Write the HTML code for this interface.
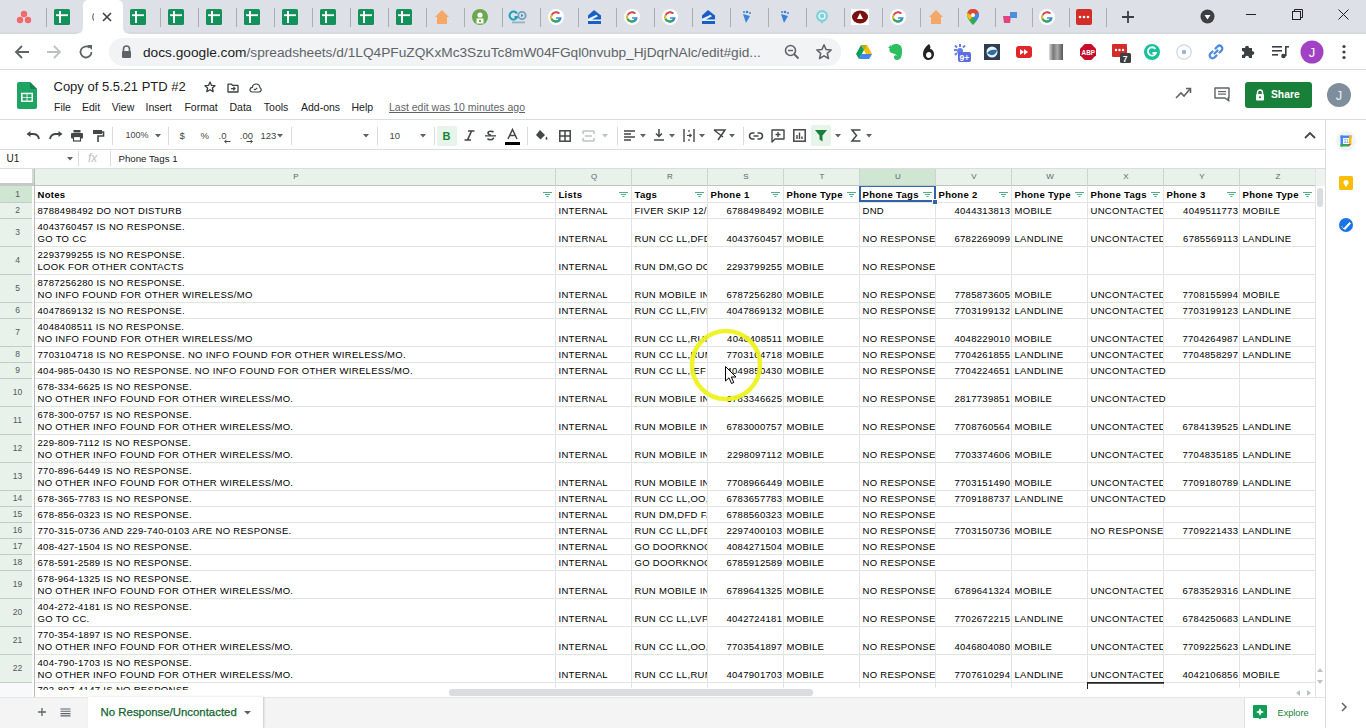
<!DOCTYPE html>
<html><head><meta charset="utf-8"><style>
html,body{margin:0;padding:0;}
body{width:1366px;height:728px;overflow:hidden;position:relative;background:#fff;font-family:"Liberation Sans",sans-serif;}
.t{position:absolute;white-space:pre;line-height:normal;}
.r{position:absolute;}
.s{position:absolute;overflow:visible;}
</style></head><body>
<div class="r" style="left:0px;top:0px;width:1366px;height:34px;background:#dde0e7;"></div><div class="r" style="left:0px;top:32px;width:1366px;height:2px;background:#d6d9de;"></div><svg class="s" style="left:74px;top:0px;" width="58" height="34" viewBox="0 0 58 34"><path d="M0 34 C6 34 9 32 9 27 L9 6 C9 2 11 0 15 0 L43 0 C47 0 49 2 49 6 L49 27 C49 32 52 34 58 34 Z" fill="#fff"/></svg><div class="r" style="left:0px;top:34px;width:1366px;height:36px;background:#fff;"></div><svg class="s" style="left:90px;top:12px;" width="6" height="10" viewBox="0 0 6 10"><path d="M3.8 1.5 C2.6 3.5 2.6 6.5 3.8 8.5" stroke="#5f6368" stroke-width="1.1" fill="none"/></svg><svg class="s" style="left:102px;top:12px;" width="10" height="10" viewBox="0 0 10 10"><path d="M1 1 L9 9 M9 1 L1 9" stroke="#3c4043" stroke-width="1.6"/></svg><svg class="s" style="left:16px;top:10px;" width="16" height="14" viewBox="0 0 16 14"><circle cx="8" cy="4" r="3.2" fill="#f06a6a"/><circle cx="4" cy="10" r="3.2" fill="#f06a6a"/><circle cx="12" cy="10" r="3.2" fill="#f06a6a"/></svg><div class="r" style="left:46px;top:8px;width:1px;height:19px;background:#a9adb4;"></div><svg class="s" style="left:54px;top:9px;" width="16" height="16" viewBox="0 0 16 16"><rect x="0" y="0" width="16" height="16" rx="1.5" fill="#12925a"/><rect x="2" y="5.3" width="12" height="1.8" fill="#fff"/><rect x="5" y="2" width="2" height="12" fill="#fff"/></svg><div class="r" style="left:160px;top:8px;width:1px;height:19px;background:#a9adb4;"></div><div class="r" style="left:198px;top:8px;width:1px;height:19px;background:#a9adb4;"></div><div class="r" style="left:236px;top:8px;width:1px;height:19px;background:#a9adb4;"></div><div class="r" style="left:274px;top:8px;width:1px;height:19px;background:#a9adb4;"></div><div class="r" style="left:312px;top:8px;width:1px;height:19px;background:#a9adb4;"></div><div class="r" style="left:350px;top:8px;width:1px;height:19px;background:#a9adb4;"></div><div class="r" style="left:388px;top:8px;width:1px;height:19px;background:#a9adb4;"></div><div class="r" style="left:426px;top:8px;width:1px;height:19px;background:#a9adb4;"></div><div class="r" style="left:464px;top:8px;width:1px;height:19px;background:#a9adb4;"></div><div class="r" style="left:502px;top:8px;width:1px;height:19px;background:#a9adb4;"></div><div class="r" style="left:540px;top:8px;width:1px;height:19px;background:#a9adb4;"></div><div class="r" style="left:578px;top:8px;width:1px;height:19px;background:#a9adb4;"></div><div class="r" style="left:616px;top:8px;width:1px;height:19px;background:#a9adb4;"></div><div class="r" style="left:654px;top:8px;width:1px;height:19px;background:#a9adb4;"></div><div class="r" style="left:692px;top:8px;width:1px;height:19px;background:#a9adb4;"></div><div class="r" style="left:730px;top:8px;width:1px;height:19px;background:#a9adb4;"></div><div class="r" style="left:768px;top:8px;width:1px;height:19px;background:#a9adb4;"></div><div class="r" style="left:806px;top:8px;width:1px;height:19px;background:#a9adb4;"></div><div class="r" style="left:844px;top:8px;width:1px;height:19px;background:#a9adb4;"></div><div class="r" style="left:882px;top:8px;width:1px;height:19px;background:#a9adb4;"></div><div class="r" style="left:920px;top:8px;width:1px;height:19px;background:#a9adb4;"></div><div class="r" style="left:958px;top:8px;width:1px;height:19px;background:#a9adb4;"></div><div class="r" style="left:995px;top:8px;width:1px;height:19px;background:#a9adb4;"></div><div class="r" style="left:1032px;top:8px;width:1px;height:19px;background:#a9adb4;"></div><div class="r" style="left:1069px;top:8px;width:1px;height:19px;background:#a9adb4;"></div><div class="r" style="left:1106px;top:8px;width:1px;height:19px;background:#a9adb4;"></div><svg class="s" style="left:130px;top:9px;" width="16" height="16" viewBox="0 0 16 16"><rect x="0" y="0" width="16" height="16" rx="1.5" fill="#12925a"/><rect x="2" y="5.3" width="12" height="1.8" fill="#fff"/><rect x="5" y="2" width="2" height="12" fill="#fff"/></svg><svg class="s" style="left:168px;top:9px;" width="16" height="16" viewBox="0 0 16 16"><rect x="0" y="0" width="16" height="16" rx="1.5" fill="#12925a"/><rect x="2" y="5.3" width="12" height="1.8" fill="#fff"/><rect x="5" y="2" width="2" height="12" fill="#fff"/></svg><svg class="s" style="left:206px;top:9px;" width="16" height="16" viewBox="0 0 16 16"><rect x="0" y="0" width="16" height="16" rx="1.5" fill="#12925a"/><rect x="2" y="5.3" width="12" height="1.8" fill="#fff"/><rect x="5" y="2" width="2" height="12" fill="#fff"/></svg><svg class="s" style="left:244px;top:9px;" width="16" height="16" viewBox="0 0 16 16"><rect x="0" y="0" width="16" height="16" rx="1.5" fill="#12925a"/><rect x="2" y="5.3" width="12" height="1.8" fill="#fff"/><rect x="5" y="2" width="2" height="12" fill="#fff"/></svg><svg class="s" style="left:282px;top:9px;" width="16" height="16" viewBox="0 0 16 16"><rect x="0" y="0" width="16" height="16" rx="1.5" fill="#12925a"/><rect x="2" y="5.3" width="12" height="1.8" fill="#fff"/><rect x="5" y="2" width="2" height="12" fill="#fff"/></svg><svg class="s" style="left:320px;top:9px;" width="16" height="16" viewBox="0 0 16 16"><rect x="0" y="0" width="16" height="16" rx="1.5" fill="#12925a"/><rect x="2" y="5.3" width="12" height="1.8" fill="#fff"/><rect x="5" y="2" width="2" height="12" fill="#fff"/></svg><svg class="s" style="left:358px;top:9px;" width="16" height="16" viewBox="0 0 16 16"><rect x="0" y="0" width="16" height="16" rx="1.5" fill="#12925a"/><rect x="2" y="5.3" width="12" height="1.8" fill="#fff"/><rect x="5" y="2" width="2" height="12" fill="#fff"/></svg><svg class="s" style="left:396px;top:9px;" width="16" height="16" viewBox="0 0 16 16"><rect x="0" y="0" width="16" height="16" rx="1.5" fill="#12925a"/><rect x="2" y="5.3" width="12" height="1.8" fill="#fff"/><rect x="5" y="2" width="2" height="12" fill="#fff"/></svg><svg class="s" style="left:434px;top:9px;" width="16" height="16" viewBox="0 0 16 16"><path d="M8 1 L15 8 L13 8 L13 15 L3 15 L3 8 L1 8 Z" fill="#f5a866"/></svg><svg class="s" style="left:472px;top:9px;" width="16" height="16" viewBox="0 0 16 16"><circle cx="8" cy="8" r="8" fill="#6aa84f"/><circle cx="8" cy="6" r="2.6" fill="#fff"/><rect x="4.5" y="9.5" width="7" height="5" fill="#fff"/><rect x="7" y="11" width="2" height="2" fill="#6aa84f"/></svg><svg class="s" style="left:509px;top:9px;" width="18" height="16" viewBox="0 0 18 16"><path d="M8 4.5 A4 4 0 1 0 8.3 8 H5.5" stroke="#1f9fb8" stroke-width="2" fill="none"/><circle cx="13" cy="6.5" r="3.7" stroke="#7a9fc0" stroke-width="1.8" fill="none"/><path d="M12 4.8 L14.6 6.5 L12 8.2Z" fill="#1f9fb8"/><rect x="3" y="12.5" width="13" height="1.8" fill="#8fb3c8"/></svg><svg class="s" style="left:548px;top:9px;" width="16" height="16" viewBox="0 0 16 16"><circle cx="8" cy="8" r="8" fill="#fff"/><path d="M12.6 8.2 H8 V9.8 H10.8 C10.5 11.2 9.4 12 8 12 A4 4 0 1 1 10.7 5.1 L11.9 3.9 A5.7 5.7 0 1 0 13.7 8.2 Z" fill="#4285f4"/><path d="M3.1 5.6 A5.6 5.6 0 0 1 11.9 3.9 L10.7 5.1 A4 4 0 0 0 4.5 6.4Z" fill="#ea4335"/><path d="M2.6 10.5 A5.6 5.6 0 0 1 3.1 5.6 L4.5 6.4 A4 4 0 0 0 4.3 9.6Z" fill="#fbbc05"/><path d="M4.3 9.6 A4 4 0 0 0 10.8 9.8 L12.6 10.2 A5.7 5.7 0 0 1 2.6 10.5Z" fill="#34a853"/></svg><svg class="s" style="left:586px;top:9px;" width="16" height="16" viewBox="0 0 16 16"><path d="M8 1 L15 6.5 V15 H2 V6.5 Z" fill="#1a5fc4"/><path d="M2 9.8 L10.5 5.8 L12 7.2 L6 10.6 H15 V12 H2Z" fill="#e8f2ff"/></svg><svg class="s" style="left:624px;top:9px;" width="16" height="16" viewBox="0 0 16 16"><circle cx="8" cy="8" r="8" fill="#fff"/><path d="M12.6 8.2 H8 V9.8 H10.8 C10.5 11.2 9.4 12 8 12 A4 4 0 1 1 10.7 5.1 L11.9 3.9 A5.7 5.7 0 1 0 13.7 8.2 Z" fill="#4285f4"/><path d="M3.1 5.6 A5.6 5.6 0 0 1 11.9 3.9 L10.7 5.1 A4 4 0 0 0 4.5 6.4Z" fill="#ea4335"/><path d="M2.6 10.5 A5.6 5.6 0 0 1 3.1 5.6 L4.5 6.4 A4 4 0 0 0 4.3 9.6Z" fill="#fbbc05"/><path d="M4.3 9.6 A4 4 0 0 0 10.8 9.8 L12.6 10.2 A5.7 5.7 0 0 1 2.6 10.5Z" fill="#34a853"/></svg><svg class="s" style="left:662px;top:9px;" width="16" height="16" viewBox="0 0 16 16"><circle cx="8" cy="8" r="8" fill="#fff"/><path d="M12.6 8.2 H8 V9.8 H10.8 C10.5 11.2 9.4 12 8 12 A4 4 0 1 1 10.7 5.1 L11.9 3.9 A5.7 5.7 0 1 0 13.7 8.2 Z" fill="#4285f4"/><path d="M3.1 5.6 A5.6 5.6 0 0 1 11.9 3.9 L10.7 5.1 A4 4 0 0 0 4.5 6.4Z" fill="#ea4335"/><path d="M2.6 10.5 A5.6 5.6 0 0 1 3.1 5.6 L4.5 6.4 A4 4 0 0 0 4.3 9.6Z" fill="#fbbc05"/><path d="M4.3 9.6 A4 4 0 0 0 10.8 9.8 L12.6 10.2 A5.7 5.7 0 0 1 2.6 10.5Z" fill="#34a853"/></svg><svg class="s" style="left:700px;top:9px;" width="16" height="16" viewBox="0 0 16 16"><path d="M8 1 L15 6.5 V15 H2 V6.5 Z" fill="#1a5fc4"/><path d="M2 9.8 L10.5 5.8 L12 7.2 L6 10.6 H15 V12 H2Z" fill="#e8f2ff"/></svg><svg class="s" style="left:738px;top:9px;" width="16" height="16" viewBox="0 0 16 16"><path d="M5 5 L12 7 L8 14 Z" fill="#3b82d6"/><circle cx="9" cy="3" r="1.3" fill="#3b82d6"/><circle cx="12" cy="4" r="1" fill="#3b82d6"/><circle cx="6" cy="3" r="1" fill="#3b82d6"/></svg><svg class="s" style="left:776px;top:9px;" width="16" height="16" viewBox="0 0 16 16"><path d="M5 5 L12 7 L8 14 Z" fill="#3b82d6"/><circle cx="9" cy="3" r="1.3" fill="#3b82d6"/><circle cx="12" cy="4" r="1" fill="#3b82d6"/><circle cx="6" cy="3" r="1" fill="#3b82d6"/></svg><svg class="s" style="left:814px;top:9px;" width="16" height="16" viewBox="0 0 16 16"><circle cx="8" cy="7" r="6" fill="#7fd3d9"/><circle cx="8" cy="7" r="3" fill="none" stroke="#fff" stroke-width="1.2"/><path d="M6 12 L8 15 L10 12Z" fill="#7fd3d9"/></svg><svg class="s" style="left:851px;top:9px;" width="18" height="16" viewBox="0 0 18 16"><rect x="0" y="0" width="18" height="16" fill="#fff"/><ellipse cx="9" cy="8" rx="8" ry="6.5" fill="#7a1010"/><path d="M9 4 L12 10 L6 10Z" fill="#fff"/></svg><svg class="s" style="left:890px;top:9px;" width="16" height="16" viewBox="0 0 16 16"><circle cx="8" cy="8" r="8" fill="#fff"/><path d="M12.6 8.2 H8 V9.8 H10.8 C10.5 11.2 9.4 12 8 12 A4 4 0 1 1 10.7 5.1 L11.9 3.9 A5.7 5.7 0 1 0 13.7 8.2 Z" fill="#4285f4"/><path d="M3.1 5.6 A5.6 5.6 0 0 1 11.9 3.9 L10.7 5.1 A4 4 0 0 0 4.5 6.4Z" fill="#ea4335"/><path d="M2.6 10.5 A5.6 5.6 0 0 1 3.1 5.6 L4.5 6.4 A4 4 0 0 0 4.3 9.6Z" fill="#fbbc05"/><path d="M4.3 9.6 A4 4 0 0 0 10.8 9.8 L12.6 10.2 A5.7 5.7 0 0 1 2.6 10.5Z" fill="#34a853"/></svg><svg class="s" style="left:928px;top:9px;" width="16" height="16" viewBox="0 0 16 16"><path d="M8 1 L15 8 L13 8 L13 15 L3 15 L3 8 L1 8 Z" fill="#f5a866"/></svg><svg class="s" style="left:965px;top:9px;" width="16" height="16" viewBox="0 0 16 16"><path d="M8 0 C4 0 2 3 2 6 C2 10 8 16 8 16 C8 16 14 10 14 6 C14 3 12 0 8 0Z" fill="#34a853"/><path d="M8 0 C5 0 3 2 2.5 4 L8 7 L13.5 4 C13 2 11 0 8 0Z" fill="#ea4335"/><path d="M13.5 4 L8 7 L11 12 C13 9 14 7.5 14 6Z" fill="#4285f4"/><path d="M2.5 4 L8 7 L5 11 C3 9 2 7 2 6Z" fill="#fbbc05"/><circle cx="8" cy="6" r="2" fill="#fff"/></svg><svg class="s" style="left:1002px;top:9px;" width="16" height="16" viewBox="0 0 16 16"><path d="M1 7 L9 7 L8 14 L2 14Z" fill="#e0457b"/><rect x="8" y="3" width="7" height="6" fill="#4a90d9"/></svg><svg class="s" style="left:1039px;top:9px;" width="16" height="16" viewBox="0 0 16 16"><circle cx="8" cy="8" r="8" fill="#fff"/><path d="M12.6 8.2 H8 V9.8 H10.8 C10.5 11.2 9.4 12 8 12 A4 4 0 1 1 10.7 5.1 L11.9 3.9 A5.7 5.7 0 1 0 13.7 8.2 Z" fill="#4285f4"/><path d="M3.1 5.6 A5.6 5.6 0 0 1 11.9 3.9 L10.7 5.1 A4 4 0 0 0 4.5 6.4Z" fill="#ea4335"/><path d="M2.6 10.5 A5.6 5.6 0 0 1 3.1 5.6 L4.5 6.4 A4 4 0 0 0 4.3 9.6Z" fill="#fbbc05"/><path d="M4.3 9.6 A4 4 0 0 0 10.8 9.8 L12.6 10.2 A5.7 5.7 0 0 1 2.6 10.5Z" fill="#34a853"/></svg><svg class="s" style="left:1076px;top:9px;" width="16" height="16" viewBox="0 0 16 16"><rect x="0" y="0" width="16" height="16" rx="2" fill="#d32d27"/><circle cx="4" cy="8" r="1.3" fill="#fff"/><circle cx="8" cy="8" r="1.3" fill="#fff"/><circle cx="12" cy="8" r="1.3" fill="#fff"/></svg><svg class="s" style="left:1122px;top:11px;" width="12" height="12" viewBox="0 0 12 12"><path d="M6 0 V12 M0 6 H12" stroke="#3c4043" stroke-width="1.8"/></svg><svg class="s" style="left:1200px;top:9px;" width="15" height="15" viewBox="0 0 15 15"><circle cx="7.5" cy="7.5" r="7" fill="#3c4043"/><path d="M4.5 6 L10.5 6 L7.5 10.5Z" fill="#fff"/></svg><div class="r" style="left:1246px;top:14px;width:10px;height:1px;background:#202124;"></div><svg class="s" style="left:1292px;top:9px;" width="11" height="11" viewBox="0 0 11 11"><rect x="0.5" y="2.5" width="8" height="8" fill="none" stroke="#202124" stroke-width="1"/><path d="M2.5 2.5 V0.5 H10.5 V8.5 H8.5" fill="none" stroke="#202124" stroke-width="1"/></svg><svg class="s" style="left:1338px;top:9px;" width="11" height="11" viewBox="0 0 11 11"><path d="M0.5 0.5 L10.5 10.5 M10.5 0.5 L0.5 10.5" stroke="#202124" stroke-width="1"/></svg><div class="r" style="left:0px;top:69px;width:1366px;height:1px;background:#dadce0;"></div><svg class="s" style="left:14px;top:44px;" width="16" height="16" viewBox="0 0 16 16"><path d="M15 8 H2 M8 2 L2 8 L8 14" stroke="#5f6368" stroke-width="1.8" fill="none"/></svg><svg class="s" style="left:46px;top:44px;" width="16" height="16" viewBox="0 0 16 16"><path d="M1 8 H14 M8 2 L14 8 L8 14" stroke="#bdc1c6" stroke-width="1.8" fill="none"/></svg><svg class="s" style="left:78px;top:44px;" width="16" height="16" viewBox="0 0 16 16"><path d="M13.5 8 A5.5 5.5 0 1 1 11.6 3.8" stroke="#5f6368" stroke-width="1.8" fill="none"/><path d="M9 1 L14 1 L14 6Z" fill="#5f6368"/></svg><div class="r" style="left:109px;top:38px;width:732px;height:28px;background:#f1f3f4;border-radius:14px;"></div><svg class="s" style="left:121px;top:45px;" width="11" height="13" viewBox="0 0 11 13"><path d="M2.5 6 V4 A3 3 0 0 1 8.5 4 V6" stroke="#5f6368" stroke-width="1.6" fill="none"/><rect x="1" y="6" width="9" height="7" rx="1" fill="#5f6368"/></svg><div class="t" style="left:143px;top:45.2px;font-size:13.7px;color:#5f6368"><span style="color:#202124">docs.google.com</span>/spreadsheets/d/1LQ4PFuZQKxMc3SzuTc8mW04FGql0nvubp_HjDqrNAlc/edit#gid...</div><svg class="s" style="left:784px;top:44px;" width="16" height="16" viewBox="0 0 16 16"><circle cx="6.5" cy="6.5" r="5" stroke="#5f6368" stroke-width="1.6" fill="none"/><path d="M10 10 L14.5 14.5" stroke="#5f6368" stroke-width="1.8"/><path d="M4 6.5 H9" stroke="#5f6368" stroke-width="1.4"/></svg><svg class="s" style="left:815px;top:43px;" width="18" height="18" viewBox="0 0 18 18"><path d="M9 1.8 L11.1 6.6 L16.2 7 L12.3 10.4 L13.5 15.5 L9 12.8 L4.5 15.5 L5.7 10.4 L1.8 7 L6.9 6.6Z" stroke="#5f6368" stroke-width="1.5" fill="none" stroke-linejoin="round"/></svg><svg class="s" style="left:856px;top:45px;" width="16" height="14" viewBox="0 0 16 14"><path d="M5 0 H11 L16 9 L13 14 Z" fill="#fbbc04"/><path d="M5 0 L0 9 L3 14 L8 5Z" fill="#0f9d58"/><path d="M3 14 H13 L16 9 H5.5Z" fill="#4285f4"/><path d="M5 0 H11 L8 5Z" fill="#1e8e3e" opacity=".3"/></svg><svg class="s" style="left:888px;top:44px;" width="15" height="16" viewBox="0 0 15 16"><path d="M3 3 C3 1 5 0 8 0 C12 0 14 2 14 7 C14 12 13 16 9 16 C7 16 6 15 6 13 C6 11 8 11 9 12 C8 9 4 10 2 8 C1 6 1 4 3 3Z" fill="#2dbe60"/><path d="M0 4 L3 1 L3 4Z" fill="#2dbe60"/></svg><svg class="s" style="left:920px;top:44px;" width="16" height="16" viewBox="0 0 16 16"><path d="M9 0 C5 3 3 6 3 10 C3 14 6 16 8.5 16 C12 16 14 13 14 10 C14 7 12 5 10 5 C11 3 10 1 9 0Z M8.5 14 C7 14 6 12.5 6 11 C6 9 7.5 8 9 8 C11 8 11.5 10 11.5 11 C11.5 13 10 14 8.5 14Z" fill="#222"/></svg><svg class="s" style="left:952px;top:43px;" width="20" height="20" viewBox="0 0 20 20"><g stroke="#6a7de6" stroke-width="2"><path d="M8 1 V4 M2 7 H5 M3 2.5 L5 4.5 M13 2.5 L11 4.5 M3 12 L5 10"/></g><circle cx="8" cy="8" r="3" fill="#6a7de6"/><rect x="6" y="9" width="13" height="10" rx="2" fill="#5b6ee1"/><text x="7.5" y="17.5" font-family="Liberation Sans" font-weight="bold" font-size="8.5" fill="#fff">9+</text></svg><svg class="s" style="left:984px;top:44px;" width="16" height="16" viewBox="0 0 16 16"><rect width="16" height="16" fill="#2c3e50"/><circle cx="8" cy="8" r="5.5" fill="#e8f1f8"/><path d="M3 9 C5 6 9 5 13 6 C12 11 8 13 3 9Z" fill="#2c6ea3"/></svg><svg class="s" style="left:1016px;top:46px;" width="16" height="12" viewBox="0 0 16 12"><rect width="16" height="12" rx="3" fill="#e0262b"/><path d="M4 3 L8 6 L4 9Z M8 3 L12 6 L8 9Z" fill="#fff"/></svg><svg class="s" style="left:1049px;top:44px;" width="14" height="16" viewBox="0 0 14 16"><defs><linearGradient id="gb" x1="0" x2="1"><stop offset="0" stop-color="#ddd"/><stop offset=".3" stop-color="#777"/><stop offset=".6" stop-color="#aaa"/><stop offset="1" stop-color="#555"/></linearGradient></defs><rect width="14" height="16" fill="url(#gb)"/></svg><svg class="s" style="left:1080px;top:44px;" width="16" height="16" viewBox="0 0 16 16"><path d="M4.7 0 H11.3 L16 4.7 V11.3 L11.3 16 H4.7 L0 11.3 V4.7Z" fill="#c70d2c"/><text x="1.6" y="10.8" font-family="Liberation Sans" font-weight="bold" font-size="6.3" fill="#fff">ABP</text></svg><svg class="s" style="left:1112px;top:44px;" width="20" height="20" viewBox="0 0 20 20"><rect width="15" height="13" rx="1" fill="#d32d27"/><circle cx="4" cy="6" r="1.2" fill="#fff"/><circle cx="7.5" cy="6" r="1.2" fill="#fff"/><circle cx="11" cy="6" r="1.2" fill="#fff"/><rect x="8" y="9" width="11" height="10" rx="1.5" fill="#3c4043"/><text x="10.8" y="17.5" font-family="Liberation Sans" font-weight="bold" font-size="8.5" fill="#fff">7</text></svg><svg class="s" style="left:1144px;top:44px;" width="16" height="16" viewBox="0 0 16 16"><circle cx="8" cy="8" r="8" fill="#15c39a"/><path d="M11.5 5 A4.2 4.2 0 1 0 12 9 H8.5" stroke="#fff" stroke-width="1.8" fill="none"/></svg><svg class="s" style="left:1176px;top:44px;" width="16" height="16" viewBox="0 0 16 16"><circle cx="8" cy="8" r="7.2" fill="#fff" stroke="#c9d6e3" stroke-width="1.2"/><circle cx="8" cy="8" r="2.2" fill="#9db4cc"/></svg><svg class="s" style="left:1208px;top:44px;" width="16" height="16" viewBox="0 0 16 16"><g stroke="#4a87e0" stroke-width="2.2" fill="none" stroke-linecap="round"><path d="M6.5 9.5 L9.5 6.5"/><path d="M7.5 4.5 L9.5 2.5 A2.5 2.5 0 0 1 13.5 6.5 L11.5 8.5"/><path d="M8.5 11.5 L6.5 13.5 A2.5 2.5 0 0 1 2.5 9.5 L4.5 7.5"/></g></svg><svg class="s" style="left:1240px;top:44px;" width="16" height="16" viewBox="0 0 16 16"><path d="M2 4 H5 C5 1 9 1 9 4 H12 V7 C15 7 15 11 12 11 V14 H9 C9 11 5 11 5 14 H2 V11 C5 11 5 7 2 7Z" fill="#3c4043"/></svg><svg class="s" style="left:1272px;top:45px;" width="17" height="14" viewBox="0 0 17 14"><g fill="#3c4043"><rect x="0" y="1" width="10" height="1.6"/><rect x="0" y="5" width="10" height="1.6"/><rect x="0" y="9" width="6" height="1.6"/><rect x="13" y="1" width="1.6" height="10"/><rect x="13" y="1" width="4" height="1.6"/><circle cx="11.5" cy="11" r="2.3"/></g></svg><svg class="s" style="left:1300px;top:40px;" width="24" height="24" viewBox="0 0 24 24"><circle cx="12" cy="12" r="11.5" fill="#a142c4"/><text x="12" y="16.5" text-anchor="middle" font-family="Liberation Sans" font-size="13" fill="#fff">J</text></svg><svg class="s" style="left:1342px;top:44px;" width="4" height="16" viewBox="0 0 4 16"><circle cx="2" cy="2.5" r="1.6" fill="#3c4043"/><circle cx="2" cy="8" r="1.6" fill="#3c4043"/><circle cx="2" cy="13.5" r="1.6" fill="#3c4043"/></svg><div class="r" style="left:0px;top:119px;width:1366px;height:1px;background:#dadce0;"></div><svg class="s" style="left:17px;top:82px;" width="20" height="27" viewBox="0 0 20 27"><path d="M0 2 A2 2 0 0 1 2 0 H13 L20 7 V25 A2 2 0 0 1 18 27 H2 A2 2 0 0 1 0 25Z" fill="#20a464"/><path d="M13 0 L20 7 H14.5 A1.5 1.5 0 0 1 13 5.5Z" fill="#16824b"/><rect x="4" y="10.7" width="12" height="9.2" fill="#fff"/><rect x="5.6" y="12.2" width="4" height="2.9" fill="#20a464"/><rect x="10.5" y="12.2" width="4" height="2.9" fill="#20a464"/><rect x="5.6" y="15.8" width="4" height="2.7" fill="#20a464"/><rect x="10.5" y="15.8" width="4" height="2.7" fill="#20a464"/></svg><div class="t" style="left:53.5px;top:78.74px;font-size:13px;color:#202124;font-weight:normal;">Copy of 5.5.21 PTD #2</div><svg class="s" style="left:204px;top:81px;" width="12" height="12" viewBox="0 0 12 12"><path d="M6 1 L7.5 4.4 L11 4.7 L8.4 7 L9.2 10.6 L6 8.7 L2.8 10.6 L3.6 7 L1 4.7 L4.5 4.4Z" stroke="#3c4043" stroke-width="1.3" fill="none" stroke-linejoin="round"/></svg><svg class="s" style="left:226.5px;top:82.5px;" width="12" height="10" viewBox="0 0 12 10"><path d="M1 1.2 H4.5 L5.5 2.3 H11 V9 H1Z" stroke="#3c4043" stroke-width="1.3" fill="none" stroke-linejoin="round"/><path d="M4 5.6 H8 M6.3 3.9 L8 5.6 L6.3 7.3" stroke="#3c4043" stroke-width="1.2" fill="none"/></svg><svg class="s" style="left:248.5px;top:82.5px;" width="13" height="10" viewBox="0 0 13 10"><path d="M3.5 9 C1.5 9 0.8 7.5 1 6.3 C1.3 4.8 2.5 4.3 3.3 4.3 C3.8 2 5.5 1 7 1 C9.5 1 10.8 3 11 4.8 C12 5.3 12.3 6.5 12 7.5 C11.6 8.6 10.8 9 10 9Z" stroke="#3c4043" stroke-width="1.2" fill="none"/><path d="M4.8 5.9 L6 6.9 L8.2 5" stroke="#3c4043" stroke-width="1.1" fill="none"/></svg><div class="t" style="left:54px;top:100.84px;font-size:10.5px;color:#202124;font-weight:normal;">File</div><div class="t" style="left:82px;top:100.84px;font-size:10.5px;color:#202124;font-weight:normal;">Edit</div><div class="t" style="left:111.7px;top:100.84px;font-size:10.5px;color:#202124;font-weight:normal;">View</div><div class="t" style="left:145.5px;top:100.84px;font-size:10.5px;color:#202124;font-weight:normal;">Insert</div><div class="t" style="left:184.4px;top:100.84px;font-size:10.5px;color:#202124;font-weight:normal;">Format</div><div class="t" style="left:229.5px;top:100.84px;font-size:10.5px;color:#202124;font-weight:normal;">Data</div><div class="t" style="left:263.8px;top:100.84px;font-size:10.5px;color:#202124;font-weight:normal;">Tools</div><div class="t" style="left:301px;top:100.84px;font-size:10.5px;color:#202124;font-weight:normal;">Add-ons</div><div class="t" style="left:351.5px;top:100.84px;font-size:10.5px;color:#202124;font-weight:normal;">Help</div><div class="t" style="left:389px;top:100.84px;font-size:10.5px;color:#5f6368;font-weight:normal;text-decoration:underline;">Last edit was 10 minutes ago</div><svg class="s" style="left:1175px;top:87px;" width="17" height="12" viewBox="0 0 17 12"><path d="M1 11 L6 6 L9 9 L15 2" stroke="#5f6368" stroke-width="1.6" fill="none"/><path d="M11 1.5 H15.5 V6" stroke="#5f6368" stroke-width="1.6" fill="none"/></svg><svg class="s" style="left:1214px;top:87px;" width="16" height="14" viewBox="0 0 16 14"><path d="M1 1 H15 V11 H14 L15 14 L11 11 H1Z" stroke="#5f6368" stroke-width="1.4" fill="none" stroke-linejoin="round"/><rect x="4" y="4" width="8" height="1.2" fill="#5f6368"/><rect x="4" y="6.5" width="8" height="1.2" fill="#5f6368"/></svg><div class="r" style="left:1245px;top:82px;width:67px;height:26px;background:#188038;border-radius:3px;"></div><svg class="s" style="left:1255px;top:89px;" width="10" height="12" viewBox="0 0 10 12"><path d="M2.5 5 V3.5 A2.5 2.5 0 0 1 7.5 3.5 V5" stroke="#fff" stroke-width="1.4" fill="none"/><rect x="1" y="5" width="8" height="6.5" rx="1" fill="#fff"/><circle cx="5" cy="8.2" r="1" fill="#188038"/></svg><div class="t" style="left:1271px;top:89.02px;font-size:10.3px;color:#fff;font-weight:bold;">Share</div><svg class="s" style="left:1327px;top:83px;" width="24" height="24" viewBox="0 0 24 24"><circle cx="12" cy="12" r="12" fill="#7e8e9c"/><text x="12" y="16.5" text-anchor="middle" font-family="Liberation Sans" font-size="13" fill="#e8eef4">J</text></svg><div class="r" style="left:0px;top:149px;width:1325px;height:1px;background:#dadce0;"></div><div class="r" style="left:1325px;top:119px;width:1px;height:609px;background:#dadce0;"></div><svg class="s" style="left:26px;top:130.8px;" width="14" height="9" viewBox="0 0 14 9"><path d="M3.5 3 H7 C10 3 12.5 5 13 8" stroke="#444746" stroke-width="1.9" fill="none"/><path d="M0.5 3 L4.5 0 V6Z" fill="#444746"/></svg><svg class="s" style="left:49px;top:130.8px;" width="14" height="9" viewBox="0 0 14 9"><path d="M10.5 3 H7 C4 3 1.5 5 1 8" stroke="#444746" stroke-width="1.9" fill="none"/><path d="M13.5 3 L9.5 0 V6Z" fill="#444746"/></svg><svg class="s" style="left:71px;top:129.8px;" width="12" height="11" viewBox="0 0 12 11"><rect x="2.5" y="0" width="7" height="2.5" fill="#444746"/><rect x="0" y="3" width="12" height="5.5" rx="1" fill="#444746"/><rect x="2.5" y="6.5" width="7" height="4.5" fill="#fff" stroke="#444746" stroke-width="1.2"/></svg><svg class="s" style="left:93px;top:129.8px;" width="11" height="12" viewBox="0 0 11 12"><rect x="0" y="0" width="9" height="4" fill="#444746"/><path d="M9 2 H10.5 V6 H5 V12" stroke="#444746" stroke-width="1.6" fill="none"/></svg><div class="r" style="left:112px;top:126.8px;width:1px;height:18px;background:#dadce0;"></div><div class="t" style="left:125.4px;top:130.32px;font-size:9px;color:#444746;font-weight:normal;">100%</div><svg class="s" style="left:155px;top:133.8px;" width="6" height="4" viewBox="0 0 6 4"><path d="M0 0 H6 L3 3.5Z" fill="#5f6368"/></svg><div class="r" style="left:168px;top:126.8px;width:1px;height:18px;background:#dadce0;"></div><div class="t" style="left:179.5px;top:129.86px;font-size:9.5px;color:#444746;font-weight:normal;">$</div><div class="t" style="left:200.5px;top:129.86px;font-size:9.5px;color:#444746;font-weight:normal;">%</div><div class="t" style="left:218.5px;top:129.86px;font-size:9.5px;color:#444746;font-weight:normal;">.0</div><svg class="s" style="left:223px;top:139.8px;" width="8" height="4" viewBox="0 0 8 4"><path d="M7.5 1.5 H2 M3.5 0 L1.5 1.5 L3.5 3" stroke="#444746" stroke-width="1" fill="none"/></svg><div class="t" style="left:239.8px;top:129.86px;font-size:9.5px;color:#444746;font-weight:normal;">.00</div><svg class="s" style="left:246px;top:139.8px;" width="8" height="4" viewBox="0 0 8 4"><path d="M0.5 1.5 H6 M4.5 0 L6.5 1.5 L4.5 3" stroke="#444746" stroke-width="1" fill="none"/></svg><div class="t" style="left:260.5px;top:129.86px;font-size:9.5px;color:#444746;font-weight:normal;">123</div><svg class="s" style="left:277px;top:133.8px;" width="6" height="4" viewBox="0 0 6 4"><path d="M0 0 H6 L3 3.5Z" fill="#5f6368"/></svg><div class="r" style="left:291px;top:126.8px;width:1px;height:18px;background:#dadce0;"></div><svg class="s" style="left:363px;top:133.8px;" width="6" height="4" viewBox="0 0 6 4"><path d="M0 0 H6 L3 3.5Z" fill="#5f6368"/></svg><div class="r" style="left:377px;top:126.8px;width:1px;height:18px;background:#dadce0;"></div><div class="t" style="left:389.5px;top:129.86px;font-size:9.5px;color:#444746;font-weight:normal;">10</div><svg class="s" style="left:420px;top:133.8px;" width="6" height="4" viewBox="0 0 6 4"><path d="M0 0 H6 L3 3.5Z" fill="#5f6368"/></svg><div class="r" style="left:434px;top:126.8px;width:1px;height:18px;background:#dadce0;"></div><div class="r" style="left:437px;top:125.8px;width:20px;height:20px;background:#e6f4ea;border-radius:2px;"></div><div class="t" style="left:442.5px;top:129.68px;font-size:11px;color:#188038;font-weight:bold;">B</div><svg class="s" style="left:464px;top:129.8px;" width="11" height="11" viewBox="0 0 11 11"><path d="M4 1 H10.5 M0.5 10 H7 M7.5 1 L3.5 10" stroke="#444746" stroke-width="1.7" fill="none"/></svg><svg class="s" style="left:485px;top:129.8px;" width="11" height="11" viewBox="0 0 11 11"><path d="M8.5 2.2 C7.5 0.8 3 0.5 3 3 C3 4.2 4.5 4.8 6 5.2 M2.5 8.5 C3.5 10 8.5 10.5 8.5 7.5" stroke="#444746" stroke-width="1.5" fill="none"/><rect x="0" y="5.2" width="11" height="1.3" fill="#444746"/></svg><svg class="s" style="left:506px;top:128.8px;" width="13" height="12" viewBox="0 0 13 12"><path d="M2 10 L6.5 0.5 L11 10 M3.8 6.5 H9.2" stroke="#444746" stroke-width="1.5" fill="none"/></svg><div class="r" style="left:505px;top:141.8px;width:15px;height:3px;background:#000;"></div><div class="r" style="left:527px;top:126.8px;width:1px;height:18px;background:#dadce0;"></div><svg class="s" style="left:535px;top:128.8px;" width="13" height="12" viewBox="0 0 13 12"><path d="M5 1 L10 6 L5.5 10.5 L1 6Z" fill="#444746"/><path d="M11.5 7.5 C11.5 7.5 10.5 9 10.5 9.8 A1 1 0 0 0 12.5 9.8 C12.5 9 11.5 7.5 11.5 7.5Z" fill="#444746"/></svg><svg class="s" style="left:559px;top:129.8px;" width="12" height="12" viewBox="0 0 12 12"><rect x="0.8" y="0.8" width="10.4" height="10.4" stroke="#444746" stroke-width="1.5" fill="none"/><path d="M6 0.8 V11.2 M0.8 6 H11.2" stroke="#444746" stroke-width="1.5"/></svg><svg class="s" style="left:582px;top:129.8px;" width="13" height="12" viewBox="0 0 13 12"><path d="M1 1 H12 M1 11 H12 M1 1 V4 M12 1 V4 M1 8 V11 M12 8 V11 M3 6 H10" stroke="#bdc1c6" stroke-width="1.5" fill="none"/></svg><svg class="s" style="left:602px;top:133.8px;" width="6" height="4" viewBox="0 0 6 4"><path d="M0 0 H6 L3 3.5Z" fill="#bdc1c6"/></svg><div class="r" style="left:617px;top:126.8px;width:1px;height:18px;background:#dadce0;"></div><svg class="s" style="left:624px;top:129.8px;" width="11" height="11" viewBox="0 0 11 11"><path d="M0 1 H11 M0 4 H7 M0 7 H11 M0 10 H7" stroke="#444746" stroke-width="1.4"/></svg><svg class="s" style="left:639.6px;top:133.8px;" width="6" height="4" viewBox="0 0 6 4"><path d="M0 0 H6 L3 3.5Z" fill="#5f6368"/></svg><svg class="s" style="left:654px;top:128.8px;" width="10" height="12" viewBox="0 0 10 12"><path d="M5 0 V7 M2 4.5 L5 7.5 L8 4.5" stroke="#444746" stroke-width="1.5" fill="none"/><path d="M0 11 H10" stroke="#444746" stroke-width="1.5"/></svg><svg class="s" style="left:669px;top:133.8px;" width="6" height="4" viewBox="0 0 6 4"><path d="M0 0 H6 L3 3.5Z" fill="#5f6368"/></svg><svg class="s" style="left:683px;top:128.8px;" width="12" height="13" viewBox="0 0 12 13"><path d="M1 0 V13 M11 0 V13" stroke="#444746" stroke-width="1.4"/><path d="M4 6.5 H8 M6.5 5 L8.2 6.5 L6.5 8 M6 1 V3 M6 10 V12" stroke="#444746" stroke-width="1.2" fill="none"/></svg><svg class="s" style="left:699px;top:133.8px;" width="6" height="4" viewBox="0 0 6 4"><path d="M0 0 H6 L3 3.5Z" fill="#5f6368"/></svg><svg class="s" style="left:713px;top:128.8px;" width="14" height="12" viewBox="0 0 14 12"><path d="M1 1 L12 1 L5 11 M1 1 L10 8" stroke="#444746" stroke-width="1.5" fill="none"/></svg><svg class="s" style="left:728.6px;top:133.8px;" width="6" height="4" viewBox="0 0 6 4"><path d="M0 0 H6 L3 3.5Z" fill="#5f6368"/></svg><div class="r" style="left:743px;top:126.8px;width:1px;height:18px;background:#dadce0;"></div><svg class="s" style="left:749px;top:131.8px;" width="14" height="8" viewBox="0 0 14 8"><path d="M5.5 1 H3.5 A3 3 0 0 0 3.5 7 H5.5 M8.5 1 H10.5 A3 3 0 0 1 10.5 7 H8.5 M4.5 4 H9.5" stroke="#444746" stroke-width="1.6" fill="none"/></svg><svg class="s" style="left:771px;top:128.8px;" width="14" height="13" viewBox="0 0 14 13"><path d="M1 1 H13 V10 H4 L1 13Z" stroke="#444746" stroke-width="1.4" fill="none" stroke-linejoin="round"/><path d="M7 3 V8 M4.5 5.5 H9.5" stroke="#444746" stroke-width="1.4"/></svg><svg class="s" style="left:793px;top:128.8px;" width="13" height="13" viewBox="0 0 13 13"><rect x="0.8" y="0.8" width="11.4" height="11.4" stroke="#444746" stroke-width="1.5" fill="none"/><path d="M4 10 V6 M6.5 10 V3.5 M9 10 V7.5" stroke="#444746" stroke-width="1.4"/></svg><div class="r" style="left:811px;top:124.8px;width:20px;height:21px;background:#e6f4ea;border-radius:2px;"></div><svg class="s" style="left:815px;top:129.8px;" width="12" height="12" viewBox="0 0 12 12"><path d="M0 0 H12 L7.5 5.5 V11.5 L4.5 9.5 V5.5Z" fill="#188038"/></svg><svg class="s" style="left:835px;top:133.8px;" width="6" height="4" viewBox="0 0 6 4"><path d="M0 0 H6 L3 3.5Z" fill="#5f6368"/></svg><svg class="s" style="left:851px;top:129.3px;" width="10" height="13" viewBox="0 0 10 13"><path d="M9.5 1 H1 L5.5 6.5 L1 12 H9.5" stroke="#444746" stroke-width="1.5" fill="none"/></svg><svg class="s" style="left:865.6px;top:133.8px;" width="6" height="4" viewBox="0 0 6 4"><path d="M0 0 H6 L3 3.5Z" fill="#5f6368"/></svg><svg class="s" style="left:1304px;top:130.8px;" width="12" height="8" viewBox="0 0 12 8"><path d="M1 7 L6 2 L11 7" stroke="#444746" stroke-width="1.8" fill="none"/></svg><div class="r" style="left:0px;top:168px;width:1325px;height:1px;background:#dadce0;"></div><div class="t" style="left:6.5px;top:152.80px;font-size:10px;color:#202124;font-weight:normal;">U1</div><svg class="s" style="left:67px;top:157px;" width="6" height="4" viewBox="0 0 6 4"><path d="M0 0 H6 L3 3.5Z" fill="#5f6368"/></svg><div class="r" style="left:78px;top:151px;width:1px;height:15px;background:#dadce0;"></div><div class="t" style="left:88px;top:151.46px;font-size:12px;color:#bdc1c6;font-weight:normal;font-style:italic;font-family:"Liberation Serif";">fx</div><div class="r" style="left:110px;top:151px;width:1px;height:15px;background:#dadce0;"></div><div class="t" style="left:118.5px;top:153.08px;font-size:9.7px;color:#202124;font-weight:normal;">Phone Tags 1</div><div class="r" style="left:35px;top:169px;width:1280px;height:17px;background:#e8f1ea;"></div><div class="r" style="left:859px;top:169px;width:76px;height:17px;background:#cfe6d2;"></div><div class="r" style="left:0px;top:169px;width:32px;height:14px;background:#fff;"></div><div class="r" style="left:0px;top:183px;width:35px;height:3px;background:#c6c9c8;"></div><div class="r" style="left:32px;top:169px;width:3px;height:14px;background:#d3d8d5;"></div><div class="r" style="left:0px;top:186px;width:32px;height:496px;background:#e8f1ea;"></div><div class="r" style="left:0px;top:682px;width:32px;height:15px;background:#f8f9fa;"></div><div class="r" style="left:0px;top:186px;width:32px;height:16px;background:#cfe6d2;"></div><div class="r" style="left:0px;top:202px;width:32px;height:1px;background:#c3ccc5;"></div><div class="r" style="left:35px;top:202px;width:1280px;height:1px;background:#e2e3e3;"></div><div class="r" style="left:0px;top:218px;width:32px;height:1px;background:#c3ccc5;"></div><div class="r" style="left:35px;top:218px;width:1280px;height:1px;background:#e2e3e3;"></div><div class="r" style="left:0px;top:246px;width:32px;height:1px;background:#c3ccc5;"></div><div class="r" style="left:35px;top:246px;width:1280px;height:1px;background:#e2e3e3;"></div><div class="r" style="left:0px;top:274px;width:32px;height:1px;background:#c3ccc5;"></div><div class="r" style="left:35px;top:274px;width:1280px;height:1px;background:#e2e3e3;"></div><div class="r" style="left:0px;top:302px;width:32px;height:1px;background:#c3ccc5;"></div><div class="r" style="left:35px;top:302px;width:1280px;height:1px;background:#e2e3e3;"></div><div class="r" style="left:0px;top:318px;width:32px;height:1px;background:#c3ccc5;"></div><div class="r" style="left:35px;top:318px;width:1280px;height:1px;background:#e2e3e3;"></div><div class="r" style="left:0px;top:346px;width:32px;height:1px;background:#c3ccc5;"></div><div class="r" style="left:35px;top:346px;width:1280px;height:1px;background:#e2e3e3;"></div><div class="r" style="left:0px;top:362px;width:32px;height:1px;background:#c3ccc5;"></div><div class="r" style="left:35px;top:362px;width:1280px;height:1px;background:#e2e3e3;"></div><div class="r" style="left:0px;top:378px;width:32px;height:1px;background:#c3ccc5;"></div><div class="r" style="left:35px;top:378px;width:1280px;height:1px;background:#e2e3e3;"></div><div class="r" style="left:0px;top:406px;width:32px;height:1px;background:#c3ccc5;"></div><div class="r" style="left:35px;top:406px;width:1280px;height:1px;background:#e2e3e3;"></div><div class="r" style="left:0px;top:434px;width:32px;height:1px;background:#c3ccc5;"></div><div class="r" style="left:35px;top:434px;width:1280px;height:1px;background:#e2e3e3;"></div><div class="r" style="left:0px;top:462px;width:32px;height:1px;background:#c3ccc5;"></div><div class="r" style="left:35px;top:462px;width:1280px;height:1px;background:#e2e3e3;"></div><div class="r" style="left:0px;top:490px;width:32px;height:1px;background:#c3ccc5;"></div><div class="r" style="left:35px;top:490px;width:1280px;height:1px;background:#e2e3e3;"></div><div class="r" style="left:0px;top:506px;width:32px;height:1px;background:#c3ccc5;"></div><div class="r" style="left:35px;top:506px;width:1280px;height:1px;background:#e2e3e3;"></div><div class="r" style="left:0px;top:522px;width:32px;height:1px;background:#c3ccc5;"></div><div class="r" style="left:35px;top:522px;width:1280px;height:1px;background:#e2e3e3;"></div><div class="r" style="left:0px;top:538px;width:32px;height:1px;background:#c3ccc5;"></div><div class="r" style="left:35px;top:538px;width:1280px;height:1px;background:#e2e3e3;"></div><div class="r" style="left:0px;top:554px;width:32px;height:1px;background:#c3ccc5;"></div><div class="r" style="left:35px;top:554px;width:1280px;height:1px;background:#e2e3e3;"></div><div class="r" style="left:0px;top:570px;width:32px;height:1px;background:#c3ccc5;"></div><div class="r" style="left:35px;top:570px;width:1280px;height:1px;background:#e2e3e3;"></div><div class="r" style="left:0px;top:598px;width:32px;height:1px;background:#c3ccc5;"></div><div class="r" style="left:35px;top:598px;width:1280px;height:1px;background:#e2e3e3;"></div><div class="r" style="left:0px;top:626px;width:32px;height:1px;background:#c3ccc5;"></div><div class="r" style="left:35px;top:626px;width:1280px;height:1px;background:#e2e3e3;"></div><div class="r" style="left:0px;top:654px;width:32px;height:1px;background:#c3ccc5;"></div><div class="r" style="left:35px;top:654px;width:1280px;height:1px;background:#e2e3e3;"></div><div class="r" style="left:0px;top:682px;width:32px;height:1px;background:#c3ccc5;"></div><div class="r" style="left:35px;top:682px;width:1280px;height:1px;background:#e2e3e3;"></div><div class="r" style="left:35px;top:185px;width:1280px;height:1px;background:#c0c4c2;"></div><div class="r" style="left:555px;top:169px;width:1px;height:17px;background:#cdd3cf;"></div><div class="r" style="left:631px;top:169px;width:1px;height:17px;background:#cdd3cf;"></div><div class="r" style="left:707px;top:169px;width:1px;height:17px;background:#cdd3cf;"></div><div class="r" style="left:783px;top:169px;width:1px;height:17px;background:#cdd3cf;"></div><div class="r" style="left:859px;top:169px;width:1px;height:17px;background:#cdd3cf;"></div><div class="r" style="left:935px;top:169px;width:1px;height:17px;background:#cdd3cf;"></div><div class="r" style="left:1011px;top:169px;width:1px;height:17px;background:#cdd3cf;"></div><div class="r" style="left:1087px;top:169px;width:1px;height:17px;background:#cdd3cf;"></div><div class="r" style="left:1163px;top:169px;width:1px;height:17px;background:#cdd3cf;"></div><div class="r" style="left:1239px;top:169px;width:1px;height:17px;background:#cdd3cf;"></div><div class="r" style="left:1315px;top:169px;width:1px;height:17px;background:#cdd3cf;"></div><div class="r" style="left:32px;top:186px;width:2px;height:511px;background:#fbfcfb;"></div><div class="r" style="left:34px;top:169px;width:1px;height:528px;background:#b9bebb;"></div><div class="t" style="left:36px;width:520px;text-align:center;top:172.44px;font-size:8px;color:#5f6368;font-weight:normal;">P</div><div class="t" style="left:556px;width:76px;text-align:center;top:172.44px;font-size:8px;color:#5f6368;font-weight:normal;">Q</div><div class="t" style="left:632px;width:76px;text-align:center;top:172.44px;font-size:8px;color:#5f6368;font-weight:normal;">R</div><div class="t" style="left:708px;width:76px;text-align:center;top:172.44px;font-size:8px;color:#5f6368;font-weight:normal;">S</div><div class="t" style="left:784px;width:76px;text-align:center;top:172.44px;font-size:8px;color:#5f6368;font-weight:normal;">T</div><div class="t" style="left:860px;width:76px;text-align:center;top:172.44px;font-size:8px;color:#5f6368;font-weight:normal;">U</div><div class="t" style="left:936px;width:76px;text-align:center;top:172.44px;font-size:8px;color:#5f6368;font-weight:normal;">V</div><div class="t" style="left:1012px;width:76px;text-align:center;top:172.44px;font-size:8px;color:#5f6368;font-weight:normal;">W</div><div class="t" style="left:1088px;width:76px;text-align:center;top:172.44px;font-size:8px;color:#5f6368;font-weight:normal;">X</div><div class="t" style="left:1164px;width:76px;text-align:center;top:172.44px;font-size:8px;color:#5f6368;font-weight:normal;">Y</div><div class="t" style="left:1240px;width:76px;text-align:center;top:172.44px;font-size:8px;color:#5f6368;font-weight:normal;">Z</div><div class="t" style="left:1.5px;width:32px;text-align:center;top:189.48px;font-size:8.5px;color:#555a57;font-weight:normal;">1</div><div class="t" style="left:1.5px;width:32px;text-align:center;top:205.48px;font-size:8.5px;color:#555a57;font-weight:normal;">2</div><div class="t" style="left:1.5px;width:32px;text-align:center;top:227.48px;font-size:8.5px;color:#555a57;font-weight:normal;">3</div><div class="t" style="left:1.5px;width:32px;text-align:center;top:255.48px;font-size:8.5px;color:#555a57;font-weight:normal;">4</div><div class="t" style="left:1.5px;width:32px;text-align:center;top:283.48px;font-size:8.5px;color:#555a57;font-weight:normal;">5</div><div class="t" style="left:1.5px;width:32px;text-align:center;top:305.48px;font-size:8.5px;color:#555a57;font-weight:normal;">6</div><div class="t" style="left:1.5px;width:32px;text-align:center;top:327.48px;font-size:8.5px;color:#555a57;font-weight:normal;">7</div><div class="t" style="left:1.5px;width:32px;text-align:center;top:349.48px;font-size:8.5px;color:#555a57;font-weight:normal;">8</div><div class="t" style="left:1.5px;width:32px;text-align:center;top:365.48px;font-size:8.5px;color:#555a57;font-weight:normal;">9</div><div class="t" style="left:1.5px;width:32px;text-align:center;top:387.48px;font-size:8.5px;color:#555a57;font-weight:normal;">10</div><div class="t" style="left:1.5px;width:32px;text-align:center;top:415.48px;font-size:8.5px;color:#555a57;font-weight:normal;">11</div><div class="t" style="left:1.5px;width:32px;text-align:center;top:443.48px;font-size:8.5px;color:#555a57;font-weight:normal;">12</div><div class="t" style="left:1.5px;width:32px;text-align:center;top:471.48px;font-size:8.5px;color:#555a57;font-weight:normal;">13</div><div class="t" style="left:1.5px;width:32px;text-align:center;top:493.48px;font-size:8.5px;color:#555a57;font-weight:normal;">14</div><div class="t" style="left:1.5px;width:32px;text-align:center;top:509.48px;font-size:8.5px;color:#555a57;font-weight:normal;">15</div><div class="t" style="left:1.5px;width:32px;text-align:center;top:525.48px;font-size:8.5px;color:#555a57;font-weight:normal;">16</div><div class="t" style="left:1.5px;width:32px;text-align:center;top:541.48px;font-size:8.5px;color:#555a57;font-weight:normal;">17</div><div class="t" style="left:1.5px;width:32px;text-align:center;top:557.48px;font-size:8.5px;color:#555a57;font-weight:normal;">18</div><div class="t" style="left:1.5px;width:32px;text-align:center;top:579.48px;font-size:8.5px;color:#555a57;font-weight:normal;">19</div><div class="t" style="left:1.5px;width:32px;text-align:center;top:607.48px;font-size:8.5px;color:#555a57;font-weight:normal;">20</div><div class="t" style="left:1.5px;width:32px;text-align:center;top:635.48px;font-size:8.5px;color:#555a57;font-weight:normal;">21</div><div class="t" style="left:1.5px;width:32px;text-align:center;top:663.48px;font-size:8.5px;color:#555a57;font-weight:normal;">22</div><div class="r" style="left:555px;top:186px;width:1px;height:16px;background:#e2e3e3;"></div><div class="r" style="left:631px;top:186px;width:1px;height:16px;background:#e2e3e3;"></div><div class="r" style="left:707px;top:186px;width:1px;height:16px;background:#e2e3e3;"></div><div class="r" style="left:783px;top:186px;width:1px;height:16px;background:#e2e3e3;"></div><div class="r" style="left:859px;top:186px;width:1px;height:16px;background:#e2e3e3;"></div><div class="r" style="left:935px;top:186px;width:1px;height:16px;background:#e2e3e3;"></div><div class="r" style="left:1011px;top:186px;width:1px;height:16px;background:#e2e3e3;"></div><div class="r" style="left:1087px;top:186px;width:1px;height:16px;background:#e2e3e3;"></div><div class="r" style="left:1163px;top:186px;width:1px;height:16px;background:#e2e3e3;"></div><div class="r" style="left:1239px;top:186px;width:1px;height:16px;background:#e2e3e3;"></div><div class="r" style="left:1315px;top:186px;width:1px;height:16px;background:#e2e3e3;"></div><div class="r" style="left:555px;top:202px;width:1px;height:16px;background:#e2e3e3;"></div><div class="r" style="left:631px;top:202px;width:1px;height:16px;background:#e2e3e3;"></div><div class="r" style="left:707px;top:202px;width:1px;height:16px;background:#e2e3e3;"></div><div class="r" style="left:783px;top:202px;width:1px;height:16px;background:#e2e3e3;"></div><div class="r" style="left:859px;top:202px;width:1px;height:16px;background:#e2e3e3;"></div><div class="r" style="left:935px;top:202px;width:1px;height:16px;background:#e2e3e3;"></div><div class="r" style="left:1011px;top:202px;width:1px;height:16px;background:#e2e3e3;"></div><div class="r" style="left:1087px;top:202px;width:1px;height:16px;background:#e2e3e3;"></div><div class="r" style="left:1163px;top:202px;width:1px;height:16px;background:#e2e3e3;"></div><div class="r" style="left:1239px;top:202px;width:1px;height:16px;background:#e2e3e3;"></div><div class="r" style="left:1315px;top:202px;width:1px;height:16px;background:#e2e3e3;"></div><div class="r" style="left:555px;top:218px;width:1px;height:28px;background:#e2e3e3;"></div><div class="r" style="left:631px;top:218px;width:1px;height:28px;background:#e2e3e3;"></div><div class="r" style="left:707px;top:218px;width:1px;height:28px;background:#e2e3e3;"></div><div class="r" style="left:783px;top:218px;width:1px;height:28px;background:#e2e3e3;"></div><div class="r" style="left:859px;top:218px;width:1px;height:28px;background:#e2e3e3;"></div><div class="r" style="left:935px;top:218px;width:1px;height:28px;background:#e2e3e3;"></div><div class="r" style="left:1011px;top:218px;width:1px;height:28px;background:#e2e3e3;"></div><div class="r" style="left:1087px;top:218px;width:1px;height:28px;background:#e2e3e3;"></div><div class="r" style="left:1163px;top:218px;width:1px;height:28px;background:#e2e3e3;"></div><div class="r" style="left:1239px;top:218px;width:1px;height:28px;background:#e2e3e3;"></div><div class="r" style="left:1315px;top:218px;width:1px;height:28px;background:#e2e3e3;"></div><div class="r" style="left:555px;top:246px;width:1px;height:28px;background:#e2e3e3;"></div><div class="r" style="left:631px;top:246px;width:1px;height:28px;background:#e2e3e3;"></div><div class="r" style="left:707px;top:246px;width:1px;height:28px;background:#e2e3e3;"></div><div class="r" style="left:783px;top:246px;width:1px;height:28px;background:#e2e3e3;"></div><div class="r" style="left:859px;top:246px;width:1px;height:28px;background:#e2e3e3;"></div><div class="r" style="left:935px;top:246px;width:1px;height:28px;background:#e2e3e3;"></div><div class="r" style="left:1011px;top:246px;width:1px;height:28px;background:#e2e3e3;"></div><div class="r" style="left:1087px;top:246px;width:1px;height:28px;background:#e2e3e3;"></div><div class="r" style="left:1163px;top:246px;width:1px;height:28px;background:#e2e3e3;"></div><div class="r" style="left:1239px;top:246px;width:1px;height:28px;background:#e2e3e3;"></div><div class="r" style="left:1315px;top:246px;width:1px;height:28px;background:#e2e3e3;"></div><div class="r" style="left:555px;top:274px;width:1px;height:28px;background:#e2e3e3;"></div><div class="r" style="left:631px;top:274px;width:1px;height:28px;background:#e2e3e3;"></div><div class="r" style="left:707px;top:274px;width:1px;height:28px;background:#e2e3e3;"></div><div class="r" style="left:783px;top:274px;width:1px;height:28px;background:#e2e3e3;"></div><div class="r" style="left:859px;top:274px;width:1px;height:28px;background:#e2e3e3;"></div><div class="r" style="left:935px;top:274px;width:1px;height:28px;background:#e2e3e3;"></div><div class="r" style="left:1011px;top:274px;width:1px;height:28px;background:#e2e3e3;"></div><div class="r" style="left:1087px;top:274px;width:1px;height:28px;background:#e2e3e3;"></div><div class="r" style="left:1163px;top:274px;width:1px;height:28px;background:#e2e3e3;"></div><div class="r" style="left:1239px;top:274px;width:1px;height:28px;background:#e2e3e3;"></div><div class="r" style="left:1315px;top:274px;width:1px;height:28px;background:#e2e3e3;"></div><div class="r" style="left:555px;top:302px;width:1px;height:16px;background:#e2e3e3;"></div><div class="r" style="left:631px;top:302px;width:1px;height:16px;background:#e2e3e3;"></div><div class="r" style="left:707px;top:302px;width:1px;height:16px;background:#e2e3e3;"></div><div class="r" style="left:783px;top:302px;width:1px;height:16px;background:#e2e3e3;"></div><div class="r" style="left:859px;top:302px;width:1px;height:16px;background:#e2e3e3;"></div><div class="r" style="left:935px;top:302px;width:1px;height:16px;background:#e2e3e3;"></div><div class="r" style="left:1011px;top:302px;width:1px;height:16px;background:#e2e3e3;"></div><div class="r" style="left:1087px;top:302px;width:1px;height:16px;background:#e2e3e3;"></div><div class="r" style="left:1163px;top:302px;width:1px;height:16px;background:#e2e3e3;"></div><div class="r" style="left:1239px;top:302px;width:1px;height:16px;background:#e2e3e3;"></div><div class="r" style="left:1315px;top:302px;width:1px;height:16px;background:#e2e3e3;"></div><div class="r" style="left:555px;top:318px;width:1px;height:28px;background:#e2e3e3;"></div><div class="r" style="left:631px;top:318px;width:1px;height:28px;background:#e2e3e3;"></div><div class="r" style="left:707px;top:318px;width:1px;height:28px;background:#e2e3e3;"></div><div class="r" style="left:783px;top:318px;width:1px;height:28px;background:#e2e3e3;"></div><div class="r" style="left:859px;top:318px;width:1px;height:28px;background:#e2e3e3;"></div><div class="r" style="left:935px;top:318px;width:1px;height:28px;background:#e2e3e3;"></div><div class="r" style="left:1011px;top:318px;width:1px;height:28px;background:#e2e3e3;"></div><div class="r" style="left:1087px;top:318px;width:1px;height:28px;background:#e2e3e3;"></div><div class="r" style="left:1163px;top:318px;width:1px;height:28px;background:#e2e3e3;"></div><div class="r" style="left:1239px;top:318px;width:1px;height:28px;background:#e2e3e3;"></div><div class="r" style="left:1315px;top:318px;width:1px;height:28px;background:#e2e3e3;"></div><div class="r" style="left:555px;top:346px;width:1px;height:16px;background:#e2e3e3;"></div><div class="r" style="left:631px;top:346px;width:1px;height:16px;background:#e2e3e3;"></div><div class="r" style="left:707px;top:346px;width:1px;height:16px;background:#e2e3e3;"></div><div class="r" style="left:783px;top:346px;width:1px;height:16px;background:#e2e3e3;"></div><div class="r" style="left:859px;top:346px;width:1px;height:16px;background:#e2e3e3;"></div><div class="r" style="left:935px;top:346px;width:1px;height:16px;background:#e2e3e3;"></div><div class="r" style="left:1011px;top:346px;width:1px;height:16px;background:#e2e3e3;"></div><div class="r" style="left:1087px;top:346px;width:1px;height:16px;background:#e2e3e3;"></div><div class="r" style="left:1163px;top:346px;width:1px;height:16px;background:#e2e3e3;"></div><div class="r" style="left:1239px;top:346px;width:1px;height:16px;background:#e2e3e3;"></div><div class="r" style="left:1315px;top:346px;width:1px;height:16px;background:#e2e3e3;"></div><div class="r" style="left:555px;top:362px;width:1px;height:16px;background:#e2e3e3;"></div><div class="r" style="left:631px;top:362px;width:1px;height:16px;background:#e2e3e3;"></div><div class="r" style="left:707px;top:362px;width:1px;height:16px;background:#e2e3e3;"></div><div class="r" style="left:783px;top:362px;width:1px;height:16px;background:#e2e3e3;"></div><div class="r" style="left:859px;top:362px;width:1px;height:16px;background:#e2e3e3;"></div><div class="r" style="left:935px;top:362px;width:1px;height:16px;background:#e2e3e3;"></div><div class="r" style="left:1011px;top:362px;width:1px;height:16px;background:#e2e3e3;"></div><div class="r" style="left:1087px;top:362px;width:1px;height:16px;background:#e2e3e3;"></div><div class="r" style="left:1163px;top:362px;width:1px;height:16px;background:#e2e3e3;"></div><div class="r" style="left:1239px;top:362px;width:1px;height:16px;background:#e2e3e3;"></div><div class="r" style="left:1315px;top:362px;width:1px;height:16px;background:#e2e3e3;"></div><div class="r" style="left:555px;top:378px;width:1px;height:28px;background:#e2e3e3;"></div><div class="r" style="left:631px;top:378px;width:1px;height:28px;background:#e2e3e3;"></div><div class="r" style="left:707px;top:378px;width:1px;height:28px;background:#e2e3e3;"></div><div class="r" style="left:783px;top:378px;width:1px;height:28px;background:#e2e3e3;"></div><div class="r" style="left:859px;top:378px;width:1px;height:28px;background:#e2e3e3;"></div><div class="r" style="left:935px;top:378px;width:1px;height:28px;background:#e2e3e3;"></div><div class="r" style="left:1011px;top:378px;width:1px;height:28px;background:#e2e3e3;"></div><div class="r" style="left:1087px;top:378px;width:1px;height:28px;background:#e2e3e3;"></div><div class="r" style="left:1163px;top:378px;width:1px;height:28px;background:#e2e3e3;"></div><div class="r" style="left:1239px;top:378px;width:1px;height:28px;background:#e2e3e3;"></div><div class="r" style="left:1315px;top:378px;width:1px;height:28px;background:#e2e3e3;"></div><div class="r" style="left:555px;top:406px;width:1px;height:28px;background:#e2e3e3;"></div><div class="r" style="left:631px;top:406px;width:1px;height:28px;background:#e2e3e3;"></div><div class="r" style="left:707px;top:406px;width:1px;height:28px;background:#e2e3e3;"></div><div class="r" style="left:783px;top:406px;width:1px;height:28px;background:#e2e3e3;"></div><div class="r" style="left:859px;top:406px;width:1px;height:28px;background:#e2e3e3;"></div><div class="r" style="left:935px;top:406px;width:1px;height:28px;background:#e2e3e3;"></div><div class="r" style="left:1011px;top:406px;width:1px;height:28px;background:#e2e3e3;"></div><div class="r" style="left:1087px;top:406px;width:1px;height:28px;background:#e2e3e3;"></div><div class="r" style="left:1163px;top:406px;width:1px;height:28px;background:#e2e3e3;"></div><div class="r" style="left:1239px;top:406px;width:1px;height:28px;background:#e2e3e3;"></div><div class="r" style="left:1315px;top:406px;width:1px;height:28px;background:#e2e3e3;"></div><div class="r" style="left:555px;top:434px;width:1px;height:28px;background:#e2e3e3;"></div><div class="r" style="left:631px;top:434px;width:1px;height:28px;background:#e2e3e3;"></div><div class="r" style="left:707px;top:434px;width:1px;height:28px;background:#e2e3e3;"></div><div class="r" style="left:783px;top:434px;width:1px;height:28px;background:#e2e3e3;"></div><div class="r" style="left:859px;top:434px;width:1px;height:28px;background:#e2e3e3;"></div><div class="r" style="left:935px;top:434px;width:1px;height:28px;background:#e2e3e3;"></div><div class="r" style="left:1011px;top:434px;width:1px;height:28px;background:#e2e3e3;"></div><div class="r" style="left:1087px;top:434px;width:1px;height:28px;background:#e2e3e3;"></div><div class="r" style="left:1163px;top:434px;width:1px;height:28px;background:#e2e3e3;"></div><div class="r" style="left:1239px;top:434px;width:1px;height:28px;background:#e2e3e3;"></div><div class="r" style="left:1315px;top:434px;width:1px;height:28px;background:#e2e3e3;"></div><div class="r" style="left:555px;top:462px;width:1px;height:28px;background:#e2e3e3;"></div><div class="r" style="left:631px;top:462px;width:1px;height:28px;background:#e2e3e3;"></div><div class="r" style="left:707px;top:462px;width:1px;height:28px;background:#e2e3e3;"></div><div class="r" style="left:783px;top:462px;width:1px;height:28px;background:#e2e3e3;"></div><div class="r" style="left:859px;top:462px;width:1px;height:28px;background:#e2e3e3;"></div><div class="r" style="left:935px;top:462px;width:1px;height:28px;background:#e2e3e3;"></div><div class="r" style="left:1011px;top:462px;width:1px;height:28px;background:#e2e3e3;"></div><div class="r" style="left:1087px;top:462px;width:1px;height:28px;background:#e2e3e3;"></div><div class="r" style="left:1163px;top:462px;width:1px;height:28px;background:#e2e3e3;"></div><div class="r" style="left:1239px;top:462px;width:1px;height:28px;background:#e2e3e3;"></div><div class="r" style="left:1315px;top:462px;width:1px;height:28px;background:#e2e3e3;"></div><div class="r" style="left:555px;top:490px;width:1px;height:16px;background:#e2e3e3;"></div><div class="r" style="left:631px;top:490px;width:1px;height:16px;background:#e2e3e3;"></div><div class="r" style="left:707px;top:490px;width:1px;height:16px;background:#e2e3e3;"></div><div class="r" style="left:783px;top:490px;width:1px;height:16px;background:#e2e3e3;"></div><div class="r" style="left:859px;top:490px;width:1px;height:16px;background:#e2e3e3;"></div><div class="r" style="left:935px;top:490px;width:1px;height:16px;background:#e2e3e3;"></div><div class="r" style="left:1011px;top:490px;width:1px;height:16px;background:#e2e3e3;"></div><div class="r" style="left:1087px;top:490px;width:1px;height:16px;background:#e2e3e3;"></div><div class="r" style="left:1163px;top:490px;width:1px;height:16px;background:#e2e3e3;"></div><div class="r" style="left:1239px;top:490px;width:1px;height:16px;background:#e2e3e3;"></div><div class="r" style="left:1315px;top:490px;width:1px;height:16px;background:#e2e3e3;"></div><div class="r" style="left:555px;top:506px;width:1px;height:16px;background:#e2e3e3;"></div><div class="r" style="left:631px;top:506px;width:1px;height:16px;background:#e2e3e3;"></div><div class="r" style="left:707px;top:506px;width:1px;height:16px;background:#e2e3e3;"></div><div class="r" style="left:783px;top:506px;width:1px;height:16px;background:#e2e3e3;"></div><div class="r" style="left:859px;top:506px;width:1px;height:16px;background:#e2e3e3;"></div><div class="r" style="left:935px;top:506px;width:1px;height:16px;background:#e2e3e3;"></div><div class="r" style="left:1011px;top:506px;width:1px;height:16px;background:#e2e3e3;"></div><div class="r" style="left:1087px;top:506px;width:1px;height:16px;background:#e2e3e3;"></div><div class="r" style="left:1163px;top:506px;width:1px;height:16px;background:#e2e3e3;"></div><div class="r" style="left:1239px;top:506px;width:1px;height:16px;background:#e2e3e3;"></div><div class="r" style="left:1315px;top:506px;width:1px;height:16px;background:#e2e3e3;"></div><div class="r" style="left:555px;top:522px;width:1px;height:16px;background:#e2e3e3;"></div><div class="r" style="left:631px;top:522px;width:1px;height:16px;background:#e2e3e3;"></div><div class="r" style="left:707px;top:522px;width:1px;height:16px;background:#e2e3e3;"></div><div class="r" style="left:783px;top:522px;width:1px;height:16px;background:#e2e3e3;"></div><div class="r" style="left:859px;top:522px;width:1px;height:16px;background:#e2e3e3;"></div><div class="r" style="left:935px;top:522px;width:1px;height:16px;background:#e2e3e3;"></div><div class="r" style="left:1011px;top:522px;width:1px;height:16px;background:#e2e3e3;"></div><div class="r" style="left:1087px;top:522px;width:1px;height:16px;background:#e2e3e3;"></div><div class="r" style="left:1163px;top:522px;width:1px;height:16px;background:#e2e3e3;"></div><div class="r" style="left:1239px;top:522px;width:1px;height:16px;background:#e2e3e3;"></div><div class="r" style="left:1315px;top:522px;width:1px;height:16px;background:#e2e3e3;"></div><div class="r" style="left:555px;top:538px;width:1px;height:16px;background:#e2e3e3;"></div><div class="r" style="left:631px;top:538px;width:1px;height:16px;background:#e2e3e3;"></div><div class="r" style="left:707px;top:538px;width:1px;height:16px;background:#e2e3e3;"></div><div class="r" style="left:783px;top:538px;width:1px;height:16px;background:#e2e3e3;"></div><div class="r" style="left:859px;top:538px;width:1px;height:16px;background:#e2e3e3;"></div><div class="r" style="left:935px;top:538px;width:1px;height:16px;background:#e2e3e3;"></div><div class="r" style="left:1011px;top:538px;width:1px;height:16px;background:#e2e3e3;"></div><div class="r" style="left:1087px;top:538px;width:1px;height:16px;background:#e2e3e3;"></div><div class="r" style="left:1163px;top:538px;width:1px;height:16px;background:#e2e3e3;"></div><div class="r" style="left:1239px;top:538px;width:1px;height:16px;background:#e2e3e3;"></div><div class="r" style="left:1315px;top:538px;width:1px;height:16px;background:#e2e3e3;"></div><div class="r" style="left:555px;top:554px;width:1px;height:16px;background:#e2e3e3;"></div><div class="r" style="left:631px;top:554px;width:1px;height:16px;background:#e2e3e3;"></div><div class="r" style="left:707px;top:554px;width:1px;height:16px;background:#e2e3e3;"></div><div class="r" style="left:783px;top:554px;width:1px;height:16px;background:#e2e3e3;"></div><div class="r" style="left:859px;top:554px;width:1px;height:16px;background:#e2e3e3;"></div><div class="r" style="left:935px;top:554px;width:1px;height:16px;background:#e2e3e3;"></div><div class="r" style="left:1011px;top:554px;width:1px;height:16px;background:#e2e3e3;"></div><div class="r" style="left:1087px;top:554px;width:1px;height:16px;background:#e2e3e3;"></div><div class="r" style="left:1163px;top:554px;width:1px;height:16px;background:#e2e3e3;"></div><div class="r" style="left:1239px;top:554px;width:1px;height:16px;background:#e2e3e3;"></div><div class="r" style="left:1315px;top:554px;width:1px;height:16px;background:#e2e3e3;"></div><div class="r" style="left:555px;top:570px;width:1px;height:28px;background:#e2e3e3;"></div><div class="r" style="left:631px;top:570px;width:1px;height:28px;background:#e2e3e3;"></div><div class="r" style="left:707px;top:570px;width:1px;height:28px;background:#e2e3e3;"></div><div class="r" style="left:783px;top:570px;width:1px;height:28px;background:#e2e3e3;"></div><div class="r" style="left:859px;top:570px;width:1px;height:28px;background:#e2e3e3;"></div><div class="r" style="left:935px;top:570px;width:1px;height:28px;background:#e2e3e3;"></div><div class="r" style="left:1011px;top:570px;width:1px;height:28px;background:#e2e3e3;"></div><div class="r" style="left:1087px;top:570px;width:1px;height:28px;background:#e2e3e3;"></div><div class="r" style="left:1163px;top:570px;width:1px;height:28px;background:#e2e3e3;"></div><div class="r" style="left:1239px;top:570px;width:1px;height:28px;background:#e2e3e3;"></div><div class="r" style="left:1315px;top:570px;width:1px;height:28px;background:#e2e3e3;"></div><div class="r" style="left:555px;top:598px;width:1px;height:28px;background:#e2e3e3;"></div><div class="r" style="left:631px;top:598px;width:1px;height:28px;background:#e2e3e3;"></div><div class="r" style="left:707px;top:598px;width:1px;height:28px;background:#e2e3e3;"></div><div class="r" style="left:783px;top:598px;width:1px;height:28px;background:#e2e3e3;"></div><div class="r" style="left:859px;top:598px;width:1px;height:28px;background:#e2e3e3;"></div><div class="r" style="left:935px;top:598px;width:1px;height:28px;background:#e2e3e3;"></div><div class="r" style="left:1011px;top:598px;width:1px;height:28px;background:#e2e3e3;"></div><div class="r" style="left:1087px;top:598px;width:1px;height:28px;background:#e2e3e3;"></div><div class="r" style="left:1163px;top:598px;width:1px;height:28px;background:#e2e3e3;"></div><div class="r" style="left:1239px;top:598px;width:1px;height:28px;background:#e2e3e3;"></div><div class="r" style="left:1315px;top:598px;width:1px;height:28px;background:#e2e3e3;"></div><div class="r" style="left:555px;top:626px;width:1px;height:28px;background:#e2e3e3;"></div><div class="r" style="left:631px;top:626px;width:1px;height:28px;background:#e2e3e3;"></div><div class="r" style="left:707px;top:626px;width:1px;height:28px;background:#e2e3e3;"></div><div class="r" style="left:783px;top:626px;width:1px;height:28px;background:#e2e3e3;"></div><div class="r" style="left:859px;top:626px;width:1px;height:28px;background:#e2e3e3;"></div><div class="r" style="left:935px;top:626px;width:1px;height:28px;background:#e2e3e3;"></div><div class="r" style="left:1011px;top:626px;width:1px;height:28px;background:#e2e3e3;"></div><div class="r" style="left:1087px;top:626px;width:1px;height:28px;background:#e2e3e3;"></div><div class="r" style="left:1163px;top:626px;width:1px;height:28px;background:#e2e3e3;"></div><div class="r" style="left:1239px;top:626px;width:1px;height:28px;background:#e2e3e3;"></div><div class="r" style="left:1315px;top:626px;width:1px;height:28px;background:#e2e3e3;"></div><div class="r" style="left:555px;top:654px;width:1px;height:28px;background:#e2e3e3;"></div><div class="r" style="left:631px;top:654px;width:1px;height:28px;background:#e2e3e3;"></div><div class="r" style="left:707px;top:654px;width:1px;height:28px;background:#e2e3e3;"></div><div class="r" style="left:783px;top:654px;width:1px;height:28px;background:#e2e3e3;"></div><div class="r" style="left:859px;top:654px;width:1px;height:28px;background:#e2e3e3;"></div><div class="r" style="left:935px;top:654px;width:1px;height:28px;background:#e2e3e3;"></div><div class="r" style="left:1011px;top:654px;width:1px;height:28px;background:#e2e3e3;"></div><div class="r" style="left:1087px;top:654px;width:1px;height:28px;background:#e2e3e3;"></div><div class="r" style="left:1163px;top:654px;width:1px;height:28px;background:#e2e3e3;"></div><div class="r" style="left:1239px;top:654px;width:1px;height:28px;background:#e2e3e3;"></div><div class="r" style="left:1315px;top:654px;width:1px;height:28px;background:#e2e3e3;"></div><div class="r" style="left:555px;top:682px;width:1px;height:6px;background:#e2e3e3;"></div><div class="r" style="left:631px;top:682px;width:1px;height:6px;background:#e2e3e3;"></div><div class="r" style="left:707px;top:682px;width:1px;height:6px;background:#e2e3e3;"></div><div class="r" style="left:783px;top:682px;width:1px;height:6px;background:#e2e3e3;"></div><div class="r" style="left:859px;top:682px;width:1px;height:6px;background:#e2e3e3;"></div><div class="r" style="left:935px;top:682px;width:1px;height:6px;background:#e2e3e3;"></div><div class="r" style="left:1011px;top:682px;width:1px;height:6px;background:#e2e3e3;"></div><div class="r" style="left:1087px;top:682px;width:1px;height:6px;background:#e2e3e3;"></div><div class="r" style="left:1163px;top:682px;width:1px;height:6px;background:#e2e3e3;"></div><div class="r" style="left:1239px;top:682px;width:1px;height:6px;background:#e2e3e3;"></div><div class="r" style="left:1315px;top:682px;width:1px;height:6px;background:#e2e3e3;"></div><div class="r" style="left:36px;top:187px;width:519px;height:15px;overflow:hidden;background:#fff"><div class="t" style="left:1.5px;top:2.06px;font-size:9.5px;letter-spacing:0.31px;color:#000;font-weight:bold">Notes</div></div><div class="r" style="left:556px;top:187px;width:75px;height:15px;overflow:hidden;background:#fff"><div class="t" style="left:2.5px;top:2.06px;font-size:9.5px;letter-spacing:0.31px;color:#000;font-weight:bold">Lists</div></div><div class="r" style="left:632px;top:187px;width:75px;height:15px;overflow:hidden;background:#fff"><div class="t" style="left:2.5px;top:2.06px;font-size:9.5px;letter-spacing:0.31px;color:#000;font-weight:bold">Tags</div></div><div class="r" style="left:708px;top:187px;width:75px;height:15px;overflow:hidden;background:#fff"><div class="t" style="left:2.5px;top:2.06px;font-size:9.5px;letter-spacing:0.31px;color:#000;font-weight:bold">Phone 1</div></div><div class="r" style="left:784px;top:187px;width:75px;height:15px;overflow:hidden;background:#fff"><div class="t" style="left:2.5px;top:2.06px;font-size:9.5px;letter-spacing:0.31px;color:#000;font-weight:bold">Phone Type</div></div><div class="r" style="left:860px;top:187px;width:75px;height:15px;overflow:hidden;background:#fff"><div class="t" style="left:2.5px;top:2.06px;font-size:9.5px;letter-spacing:0.31px;color:#000;font-weight:bold">Phone Tags</div></div><div class="r" style="left:936px;top:187px;width:75px;height:15px;overflow:hidden;background:#fff"><div class="t" style="left:2.5px;top:2.06px;font-size:9.5px;letter-spacing:0.31px;color:#000;font-weight:bold">Phone 2</div></div><div class="r" style="left:1012px;top:187px;width:75px;height:15px;overflow:hidden;background:#fff"><div class="t" style="left:2.5px;top:2.06px;font-size:9.5px;letter-spacing:0.31px;color:#000;font-weight:bold">Phone Type</div></div><div class="r" style="left:1088px;top:187px;width:75px;height:15px;overflow:hidden;background:#fff"><div class="t" style="left:2.5px;top:2.06px;font-size:9.5px;letter-spacing:0.31px;color:#000;font-weight:bold">Phone Tags</div></div><div class="r" style="left:1164px;top:187px;width:75px;height:15px;overflow:hidden;background:#fff"><div class="t" style="left:2.5px;top:2.06px;font-size:9.5px;letter-spacing:0.31px;color:#000;font-weight:bold">Phone 3</div></div><div class="r" style="left:1240px;top:187px;width:75px;height:15px;overflow:hidden;background:#fff"><div class="t" style="left:2.5px;top:2.06px;font-size:9.5px;letter-spacing:0.31px;color:#000;font-weight:bold">Phone Type</div></div><div class="r" style="left:36px;top:203px;width:519px;height:15px;overflow:hidden;background:#fff"><div class="t" style="left:1.5px;top:2.46px;font-size:9.5px;letter-spacing:0.31px;color:#000;font-weight:normal">8788498492 DO NOT DISTURB</div></div><div class="r" style="left:556px;top:203px;width:75px;height:15px;overflow:hidden;background:#fff"><div class="t" style="left:2.5px;top:2.46px;font-size:9.5px;letter-spacing:0.31px;color:#000;font-weight:normal">INTERNAL</div></div><div class="r" style="left:632px;top:203px;width:75px;height:15px;overflow:hidden;background:#fff"><div class="t" style="left:2.5px;top:2.46px;font-size:9.5px;letter-spacing:0.31px;color:#000;font-weight:normal">FIVER SKIP 12/2/20</div></div><div class="r" style="left:708px;top:203px;width:75px;height:15px;overflow:hidden;background:#fff"><div class="t" style="right:0.7px;top:2.46px;font-size:9.5px;letter-spacing:0.31px;color:#000;font-weight:normal">6788498492</div></div><div class="r" style="left:784px;top:203px;width:75px;height:15px;overflow:hidden;background:#fff"><div class="t" style="left:2.5px;top:2.46px;font-size:9.5px;letter-spacing:0.31px;color:#000;font-weight:normal">MOBILE</div></div><div class="r" style="left:860px;top:203px;width:75px;height:15px;overflow:hidden;background:#fff"><div class="t" style="left:2.5px;top:2.46px;font-size:9.5px;letter-spacing:0.31px;color:#000;font-weight:normal">DND</div></div><div class="r" style="left:936px;top:203px;width:75px;height:15px;overflow:hidden;background:#fff"><div class="t" style="right:0.7px;top:2.46px;font-size:9.5px;letter-spacing:0.31px;color:#000;font-weight:normal">4044313813</div></div><div class="r" style="left:1012px;top:203px;width:75px;height:15px;overflow:hidden;background:#fff"><div class="t" style="left:2.5px;top:2.46px;font-size:9.5px;letter-spacing:0.31px;color:#000;font-weight:normal">MOBILE</div></div><div class="r" style="left:1088px;top:203px;width:75px;height:15px;overflow:hidden;background:#fff"><div class="t" style="left:2.5px;top:2.46px;font-size:9.5px;letter-spacing:0.31px;color:#000;font-weight:normal">UNCONTACTED</div></div><div class="r" style="left:1164px;top:203px;width:75px;height:15px;overflow:hidden;background:#fff"><div class="t" style="right:0.7px;top:2.46px;font-size:9.5px;letter-spacing:0.31px;color:#000;font-weight:normal">4049511773</div></div><div class="r" style="left:1240px;top:203px;width:75px;height:15px;overflow:hidden;background:#fff"><div class="t" style="left:2.5px;top:2.46px;font-size:9.5px;letter-spacing:0.31px;color:#000;font-weight:normal">MOBILE</div></div><div class="r" style="left:36px;top:219px;width:519px;height:27px;overflow:hidden;background:#fff"><div class="t" style="left:1.5px;top:2.46px;font-size:9.5px;letter-spacing:0.31px;color:#000;font-weight:normal">4043760457 IS NO RESPONSE.</div><div class="t" style="left:1.5px;top:14.46px;font-size:9.5px;letter-spacing:0.31px;color:#000;font-weight:normal">GO TO CC</div></div><div class="r" style="left:556px;top:219px;width:75px;height:27px;overflow:hidden;background:#fff"><div class="t" style="left:2.5px;top:14.46px;font-size:9.5px;letter-spacing:0.31px;color:#000;font-weight:normal">INTERNAL</div></div><div class="r" style="left:632px;top:219px;width:75px;height:27px;overflow:hidden;background:#fff"><div class="t" style="left:2.5px;top:14.46px;font-size:9.5px;letter-spacing:0.31px;color:#000;font-weight:normal">RUN CC LL,DFD</div></div><div class="r" style="left:708px;top:219px;width:75px;height:27px;overflow:hidden;background:#fff"><div class="t" style="right:0.7px;top:14.46px;font-size:9.5px;letter-spacing:0.31px;color:#000;font-weight:normal">4043760457</div></div><div class="r" style="left:784px;top:219px;width:75px;height:27px;overflow:hidden;background:#fff"><div class="t" style="left:2.5px;top:14.46px;font-size:9.5px;letter-spacing:0.31px;color:#000;font-weight:normal">MOBILE</div></div><div class="r" style="left:860px;top:219px;width:75px;height:27px;overflow:hidden;background:#fff"><div class="t" style="left:2.5px;top:14.46px;font-size:9.5px;letter-spacing:0.31px;color:#000;font-weight:normal">NO RESPONSE</div></div><div class="r" style="left:936px;top:219px;width:75px;height:27px;overflow:hidden;background:#fff"><div class="t" style="right:0.7px;top:14.46px;font-size:9.5px;letter-spacing:0.31px;color:#000;font-weight:normal">6782269099</div></div><div class="r" style="left:1012px;top:219px;width:75px;height:27px;overflow:hidden;background:#fff"><div class="t" style="left:2.5px;top:14.46px;font-size:9.5px;letter-spacing:0.31px;color:#000;font-weight:normal">LANDLINE</div></div><div class="r" style="left:1088px;top:219px;width:75px;height:27px;overflow:hidden;background:#fff"><div class="t" style="left:2.5px;top:14.46px;font-size:9.5px;letter-spacing:0.31px;color:#000;font-weight:normal">UNCONTACTED</div></div><div class="r" style="left:1164px;top:219px;width:75px;height:27px;overflow:hidden;background:#fff"><div class="t" style="right:0.7px;top:14.46px;font-size:9.5px;letter-spacing:0.31px;color:#000;font-weight:normal">6785569113</div></div><div class="r" style="left:1240px;top:219px;width:75px;height:27px;overflow:hidden;background:#fff"><div class="t" style="left:2.5px;top:14.46px;font-size:9.5px;letter-spacing:0.31px;color:#000;font-weight:normal">LANDLINE</div></div><div class="r" style="left:36px;top:247px;width:519px;height:27px;overflow:hidden;background:#fff"><div class="t" style="left:1.5px;top:2.46px;font-size:9.5px;letter-spacing:0.31px;color:#000;font-weight:normal">2293799255 IS NO RESPONSE.</div><div class="t" style="left:1.5px;top:14.46px;font-size:9.5px;letter-spacing:0.31px;color:#000;font-weight:normal">LOOK FOR OTHER CONTACTS</div></div><div class="r" style="left:556px;top:247px;width:75px;height:27px;overflow:hidden;background:#fff"><div class="t" style="left:2.5px;top:14.46px;font-size:9.5px;letter-spacing:0.31px;color:#000;font-weight:normal">INTERNAL</div></div><div class="r" style="left:632px;top:247px;width:75px;height:27px;overflow:hidden;background:#fff"><div class="t" style="left:2.5px;top:14.46px;font-size:9.5px;letter-spacing:0.31px;color:#000;font-weight:normal">RUN DM,GO DOORKNOCK</div></div><div class="r" style="left:708px;top:247px;width:75px;height:27px;overflow:hidden;background:#fff"><div class="t" style="right:0.7px;top:14.46px;font-size:9.5px;letter-spacing:0.31px;color:#000;font-weight:normal">2293799255</div></div><div class="r" style="left:784px;top:247px;width:75px;height:27px;overflow:hidden;background:#fff"><div class="t" style="left:2.5px;top:14.46px;font-size:9.5px;letter-spacing:0.31px;color:#000;font-weight:normal">MOBILE</div></div><div class="r" style="left:860px;top:247px;width:77px;height:27px;overflow:hidden;background:#fff"><div class="t" style="left:2.5px;top:14.46px;font-size:9.5px;letter-spacing:0.31px;color:#000;font-weight:normal">NO RESPONSE</div></div><div class="r" style="left:36px;top:275px;width:519px;height:27px;overflow:hidden;background:#fff"><div class="t" style="left:1.5px;top:2.46px;font-size:9.5px;letter-spacing:0.31px;color:#000;font-weight:normal">8787256280 IS NO RESPONSE.</div><div class="t" style="left:1.5px;top:14.46px;font-size:9.5px;letter-spacing:0.31px;color:#000;font-weight:normal">NO INFO FOUND FOR OTHER WIRELESS/MO</div></div><div class="r" style="left:556px;top:275px;width:75px;height:27px;overflow:hidden;background:#fff"><div class="t" style="left:2.5px;top:14.46px;font-size:9.5px;letter-spacing:0.31px;color:#000;font-weight:normal">INTERNAL</div></div><div class="r" style="left:632px;top:275px;width:75px;height:27px;overflow:hidden;background:#fff"><div class="t" style="left:2.5px;top:14.46px;font-size:9.5px;letter-spacing:0.31px;color:#000;font-weight:normal">RUN MOBILE INFO</div></div><div class="r" style="left:708px;top:275px;width:75px;height:27px;overflow:hidden;background:#fff"><div class="t" style="right:0.7px;top:14.46px;font-size:9.5px;letter-spacing:0.31px;color:#000;font-weight:normal">6787256280</div></div><div class="r" style="left:784px;top:275px;width:75px;height:27px;overflow:hidden;background:#fff"><div class="t" style="left:2.5px;top:14.46px;font-size:9.5px;letter-spacing:0.31px;color:#000;font-weight:normal">MOBILE</div></div><div class="r" style="left:860px;top:275px;width:75px;height:27px;overflow:hidden;background:#fff"><div class="t" style="left:2.5px;top:14.46px;font-size:9.5px;letter-spacing:0.31px;color:#000;font-weight:normal">NO RESPONSE</div></div><div class="r" style="left:936px;top:275px;width:75px;height:27px;overflow:hidden;background:#fff"><div class="t" style="right:0.7px;top:14.46px;font-size:9.5px;letter-spacing:0.31px;color:#000;font-weight:normal">7785873605</div></div><div class="r" style="left:1012px;top:275px;width:75px;height:27px;overflow:hidden;background:#fff"><div class="t" style="left:2.5px;top:14.46px;font-size:9.5px;letter-spacing:0.31px;color:#000;font-weight:normal">MOBILE</div></div><div class="r" style="left:1088px;top:275px;width:75px;height:27px;overflow:hidden;background:#fff"><div class="t" style="left:2.5px;top:14.46px;font-size:9.5px;letter-spacing:0.31px;color:#000;font-weight:normal">UNCONTACTED</div></div><div class="r" style="left:1164px;top:275px;width:75px;height:27px;overflow:hidden;background:#fff"><div class="t" style="right:0.7px;top:14.46px;font-size:9.5px;letter-spacing:0.31px;color:#000;font-weight:normal">7708155994</div></div><div class="r" style="left:1240px;top:275px;width:75px;height:27px;overflow:hidden;background:#fff"><div class="t" style="left:2.5px;top:14.46px;font-size:9.5px;letter-spacing:0.31px;color:#000;font-weight:normal">MOBILE</div></div><div class="r" style="left:36px;top:303px;width:519px;height:15px;overflow:hidden;background:#fff"><div class="t" style="left:1.5px;top:2.46px;font-size:9.5px;letter-spacing:0.31px;color:#000;font-weight:normal">4047869132 IS NO RESPONSE.</div></div><div class="r" style="left:556px;top:303px;width:75px;height:15px;overflow:hidden;background:#fff"><div class="t" style="left:2.5px;top:2.46px;font-size:9.5px;letter-spacing:0.31px;color:#000;font-weight:normal">INTERNAL</div></div><div class="r" style="left:632px;top:303px;width:75px;height:15px;overflow:hidden;background:#fff"><div class="t" style="left:2.5px;top:2.46px;font-size:9.5px;letter-spacing:0.31px;color:#000;font-weight:normal">RUN CC LL,FIVER</div></div><div class="r" style="left:708px;top:303px;width:75px;height:15px;overflow:hidden;background:#fff"><div class="t" style="right:0.7px;top:2.46px;font-size:9.5px;letter-spacing:0.31px;color:#000;font-weight:normal">4047869132</div></div><div class="r" style="left:784px;top:303px;width:75px;height:15px;overflow:hidden;background:#fff"><div class="t" style="left:2.5px;top:2.46px;font-size:9.5px;letter-spacing:0.31px;color:#000;font-weight:normal">MOBILE</div></div><div class="r" style="left:860px;top:303px;width:75px;height:15px;overflow:hidden;background:#fff"><div class="t" style="left:2.5px;top:2.46px;font-size:9.5px;letter-spacing:0.31px;color:#000;font-weight:normal">NO RESPONSE</div></div><div class="r" style="left:936px;top:303px;width:75px;height:15px;overflow:hidden;background:#fff"><div class="t" style="right:0.7px;top:2.46px;font-size:9.5px;letter-spacing:0.31px;color:#000;font-weight:normal">7703199132</div></div><div class="r" style="left:1012px;top:303px;width:75px;height:15px;overflow:hidden;background:#fff"><div class="t" style="left:2.5px;top:2.46px;font-size:9.5px;letter-spacing:0.31px;color:#000;font-weight:normal">LANDLINE</div></div><div class="r" style="left:1088px;top:303px;width:75px;height:15px;overflow:hidden;background:#fff"><div class="t" style="left:2.5px;top:2.46px;font-size:9.5px;letter-spacing:0.31px;color:#000;font-weight:normal">UNCONTACTED</div></div><div class="r" style="left:1164px;top:303px;width:75px;height:15px;overflow:hidden;background:#fff"><div class="t" style="right:0.7px;top:2.46px;font-size:9.5px;letter-spacing:0.31px;color:#000;font-weight:normal">7703199123</div></div><div class="r" style="left:1240px;top:303px;width:75px;height:15px;overflow:hidden;background:#fff"><div class="t" style="left:2.5px;top:2.46px;font-size:9.5px;letter-spacing:0.31px;color:#000;font-weight:normal">LANDLINE</div></div><div class="r" style="left:36px;top:319px;width:519px;height:27px;overflow:hidden;background:#fff"><div class="t" style="left:1.5px;top:2.46px;font-size:9.5px;letter-spacing:0.31px;color:#000;font-weight:normal">4048408511 IS NO RESPONSE.</div><div class="t" style="left:1.5px;top:14.46px;font-size:9.5px;letter-spacing:0.31px;color:#000;font-weight:normal">NO INFO FOUND FOR OTHER WIRELESS/MO</div></div><div class="r" style="left:556px;top:319px;width:75px;height:27px;overflow:hidden;background:#fff"><div class="t" style="left:2.5px;top:14.46px;font-size:9.5px;letter-spacing:0.31px;color:#000;font-weight:normal">INTERNAL</div></div><div class="r" style="left:632px;top:319px;width:75px;height:27px;overflow:hidden;background:#fff"><div class="t" style="left:2.5px;top:14.46px;font-size:9.5px;letter-spacing:0.31px;color:#000;font-weight:normal">RUN CC LL,RUN</div></div><div class="r" style="left:708px;top:319px;width:75px;height:27px;overflow:hidden;background:#fff"><div class="t" style="right:0.7px;top:14.46px;font-size:9.5px;letter-spacing:0.31px;color:#000;font-weight:normal">4048408511</div></div><div class="r" style="left:784px;top:319px;width:75px;height:27px;overflow:hidden;background:#fff"><div class="t" style="left:2.5px;top:14.46px;font-size:9.5px;letter-spacing:0.31px;color:#000;font-weight:normal">MOBILE</div></div><div class="r" style="left:860px;top:319px;width:75px;height:27px;overflow:hidden;background:#fff"><div class="t" style="left:2.5px;top:14.46px;font-size:9.5px;letter-spacing:0.31px;color:#000;font-weight:normal">NO RESPONSE</div></div><div class="r" style="left:936px;top:319px;width:75px;height:27px;overflow:hidden;background:#fff"><div class="t" style="right:0.7px;top:14.46px;font-size:9.5px;letter-spacing:0.31px;color:#000;font-weight:normal">4048229010</div></div><div class="r" style="left:1012px;top:319px;width:75px;height:27px;overflow:hidden;background:#fff"><div class="t" style="left:2.5px;top:14.46px;font-size:9.5px;letter-spacing:0.31px;color:#000;font-weight:normal">MOBILE</div></div><div class="r" style="left:1088px;top:319px;width:75px;height:27px;overflow:hidden;background:#fff"><div class="t" style="left:2.5px;top:14.46px;font-size:9.5px;letter-spacing:0.31px;color:#000;font-weight:normal">UNCONTACTED</div></div><div class="r" style="left:1164px;top:319px;width:75px;height:27px;overflow:hidden;background:#fff"><div class="t" style="right:0.7px;top:14.46px;font-size:9.5px;letter-spacing:0.31px;color:#000;font-weight:normal">7704264987</div></div><div class="r" style="left:1240px;top:319px;width:75px;height:27px;overflow:hidden;background:#fff"><div class="t" style="left:2.5px;top:14.46px;font-size:9.5px;letter-spacing:0.31px;color:#000;font-weight:normal">LANDLINE</div></div><div class="r" style="left:36px;top:347px;width:519px;height:15px;overflow:hidden;background:#fff"><div class="t" style="left:1.5px;top:2.46px;font-size:9.5px;letter-spacing:0.31px;color:#000;font-weight:normal">7703104718 IS NO RESPONSE. NO INFO FOUND FOR OTHER WIRELESS/MO.</div></div><div class="r" style="left:556px;top:347px;width:75px;height:15px;overflow:hidden;background:#fff"><div class="t" style="left:2.5px;top:2.46px;font-size:9.5px;letter-spacing:0.31px;color:#000;font-weight:normal">INTERNAL</div></div><div class="r" style="left:632px;top:347px;width:75px;height:15px;overflow:hidden;background:#fff"><div class="t" style="left:2.5px;top:2.46px;font-size:9.5px;letter-spacing:0.31px;color:#000;font-weight:normal">RUN CC LL,RUN</div></div><div class="r" style="left:708px;top:347px;width:75px;height:15px;overflow:hidden;background:#fff"><div class="t" style="right:0.7px;top:2.46px;font-size:9.5px;letter-spacing:0.31px;color:#000;font-weight:normal">7703104718</div></div><div class="r" style="left:784px;top:347px;width:75px;height:15px;overflow:hidden;background:#fff"><div class="t" style="left:2.5px;top:2.46px;font-size:9.5px;letter-spacing:0.31px;color:#000;font-weight:normal">MOBILE</div></div><div class="r" style="left:860px;top:347px;width:75px;height:15px;overflow:hidden;background:#fff"><div class="t" style="left:2.5px;top:2.46px;font-size:9.5px;letter-spacing:0.31px;color:#000;font-weight:normal">NO RESPONSE</div></div><div class="r" style="left:936px;top:347px;width:75px;height:15px;overflow:hidden;background:#fff"><div class="t" style="right:0.7px;top:2.46px;font-size:9.5px;letter-spacing:0.31px;color:#000;font-weight:normal">7704261855</div></div><div class="r" style="left:1012px;top:347px;width:75px;height:15px;overflow:hidden;background:#fff"><div class="t" style="left:2.5px;top:2.46px;font-size:9.5px;letter-spacing:0.31px;color:#000;font-weight:normal">LANDLINE</div></div><div class="r" style="left:1088px;top:347px;width:75px;height:15px;overflow:hidden;background:#fff"><div class="t" style="left:2.5px;top:2.46px;font-size:9.5px;letter-spacing:0.31px;color:#000;font-weight:normal">UNCONTACTED</div></div><div class="r" style="left:1164px;top:347px;width:75px;height:15px;overflow:hidden;background:#fff"><div class="t" style="right:0.7px;top:2.46px;font-size:9.5px;letter-spacing:0.31px;color:#000;font-weight:normal">7704858297</div></div><div class="r" style="left:1240px;top:347px;width:75px;height:15px;overflow:hidden;background:#fff"><div class="t" style="left:2.5px;top:2.46px;font-size:9.5px;letter-spacing:0.31px;color:#000;font-weight:normal">LANDLINE</div></div><div class="r" style="left:36px;top:363px;width:519px;height:15px;overflow:hidden;background:#fff"><div class="t" style="left:1.5px;top:2.46px;font-size:9.5px;letter-spacing:0.31px;color:#000;font-weight:normal">404-985-0430 IS NO RESPONSE. NO INFO FOUND FOR OTHER WIRELESS/MO.</div></div><div class="r" style="left:556px;top:363px;width:75px;height:15px;overflow:hidden;background:#fff"><div class="t" style="left:2.5px;top:2.46px;font-size:9.5px;letter-spacing:0.31px;color:#000;font-weight:normal">INTERNAL</div></div><div class="r" style="left:632px;top:363px;width:75px;height:15px;overflow:hidden;background:#fff"><div class="t" style="left:2.5px;top:2.46px;font-size:9.5px;letter-spacing:0.31px;color:#000;font-weight:normal">RUN CC LL,IEF</div></div><div class="r" style="left:708px;top:363px;width:75px;height:15px;overflow:hidden;background:#fff"><div class="t" style="right:0.7px;top:2.46px;font-size:9.5px;letter-spacing:0.31px;color:#000;font-weight:normal">4049850430</div></div><div class="r" style="left:784px;top:363px;width:75px;height:15px;overflow:hidden;background:#fff"><div class="t" style="left:2.5px;top:2.46px;font-size:9.5px;letter-spacing:0.31px;color:#000;font-weight:normal">MOBILE</div></div><div class="r" style="left:860px;top:363px;width:75px;height:15px;overflow:hidden;background:#fff"><div class="t" style="left:2.5px;top:2.46px;font-size:9.5px;letter-spacing:0.31px;color:#000;font-weight:normal">NO RESPONSE</div></div><div class="r" style="left:936px;top:363px;width:75px;height:15px;overflow:hidden;background:#fff"><div class="t" style="right:0.7px;top:2.46px;font-size:9.5px;letter-spacing:0.31px;color:#000;font-weight:normal">7704224651</div></div><div class="r" style="left:1012px;top:363px;width:75px;height:15px;overflow:hidden;background:#fff"><div class="t" style="left:2.5px;top:2.46px;font-size:9.5px;letter-spacing:0.31px;color:#000;font-weight:normal">LANDLINE</div></div><div class="r" style="left:1088px;top:363px;width:80px;height:15px;overflow:hidden;background:#fff"><div class="t" style="left:2.5px;top:2.46px;font-size:9.5px;letter-spacing:0.31px;color:#000;font-weight:normal">UNCONTACTED</div></div><div class="r" style="left:36px;top:379px;width:519px;height:27px;overflow:hidden;background:#fff"><div class="t" style="left:1.5px;top:2.46px;font-size:9.5px;letter-spacing:0.31px;color:#000;font-weight:normal">678-334-6625 IS NO RESPONSE.</div><div class="t" style="left:1.5px;top:14.46px;font-size:9.5px;letter-spacing:0.31px;color:#000;font-weight:normal">NO OTHER INFO FOUND FOR OTHER WIRELESS/MO.</div></div><div class="r" style="left:556px;top:379px;width:75px;height:27px;overflow:hidden;background:#fff"><div class="t" style="left:2.5px;top:14.46px;font-size:9.5px;letter-spacing:0.31px;color:#000;font-weight:normal">INTERNAL</div></div><div class="r" style="left:632px;top:379px;width:75px;height:27px;overflow:hidden;background:#fff"><div class="t" style="left:2.5px;top:14.46px;font-size:9.5px;letter-spacing:0.31px;color:#000;font-weight:normal">RUN MOBILE INFO</div></div><div class="r" style="left:708px;top:379px;width:75px;height:27px;overflow:hidden;background:#fff"><div class="t" style="right:0.7px;top:14.46px;font-size:9.5px;letter-spacing:0.31px;color:#000;font-weight:normal">6783346625</div></div><div class="r" style="left:784px;top:379px;width:75px;height:27px;overflow:hidden;background:#fff"><div class="t" style="left:2.5px;top:14.46px;font-size:9.5px;letter-spacing:0.31px;color:#000;font-weight:normal">MOBILE</div></div><div class="r" style="left:860px;top:379px;width:75px;height:27px;overflow:hidden;background:#fff"><div class="t" style="left:2.5px;top:14.46px;font-size:9.5px;letter-spacing:0.31px;color:#000;font-weight:normal">NO RESPONSE</div></div><div class="r" style="left:936px;top:379px;width:75px;height:27px;overflow:hidden;background:#fff"><div class="t" style="right:0.7px;top:14.46px;font-size:9.5px;letter-spacing:0.31px;color:#000;font-weight:normal">2817739851</div></div><div class="r" style="left:1012px;top:379px;width:75px;height:27px;overflow:hidden;background:#fff"><div class="t" style="left:2.5px;top:14.46px;font-size:9.5px;letter-spacing:0.31px;color:#000;font-weight:normal">MOBILE</div></div><div class="r" style="left:1088px;top:379px;width:80px;height:27px;overflow:hidden;background:#fff"><div class="t" style="left:2.5px;top:14.46px;font-size:9.5px;letter-spacing:0.31px;color:#000;font-weight:normal">UNCONTACTED</div></div><div class="r" style="left:36px;top:407px;width:519px;height:27px;overflow:hidden;background:#fff"><div class="t" style="left:1.5px;top:2.46px;font-size:9.5px;letter-spacing:0.31px;color:#000;font-weight:normal">678-300-0757 IS NO RESPONSE.</div><div class="t" style="left:1.5px;top:14.46px;font-size:9.5px;letter-spacing:0.31px;color:#000;font-weight:normal">NO OTHER INFO FOUND FOR OTHER WIRELESS/MO.</div></div><div class="r" style="left:556px;top:407px;width:75px;height:27px;overflow:hidden;background:#fff"><div class="t" style="left:2.5px;top:14.46px;font-size:9.5px;letter-spacing:0.31px;color:#000;font-weight:normal">INTERNAL</div></div><div class="r" style="left:632px;top:407px;width:75px;height:27px;overflow:hidden;background:#fff"><div class="t" style="left:2.5px;top:14.46px;font-size:9.5px;letter-spacing:0.31px;color:#000;font-weight:normal">RUN MOBILE INFO</div></div><div class="r" style="left:708px;top:407px;width:75px;height:27px;overflow:hidden;background:#fff"><div class="t" style="right:0.7px;top:14.46px;font-size:9.5px;letter-spacing:0.31px;color:#000;font-weight:normal">6783000757</div></div><div class="r" style="left:784px;top:407px;width:75px;height:27px;overflow:hidden;background:#fff"><div class="t" style="left:2.5px;top:14.46px;font-size:9.5px;letter-spacing:0.31px;color:#000;font-weight:normal">MOBILE</div></div><div class="r" style="left:860px;top:407px;width:75px;height:27px;overflow:hidden;background:#fff"><div class="t" style="left:2.5px;top:14.46px;font-size:9.5px;letter-spacing:0.31px;color:#000;font-weight:normal">NO RESPONSE</div></div><div class="r" style="left:936px;top:407px;width:75px;height:27px;overflow:hidden;background:#fff"><div class="t" style="right:0.7px;top:14.46px;font-size:9.5px;letter-spacing:0.31px;color:#000;font-weight:normal">7708760564</div></div><div class="r" style="left:1012px;top:407px;width:75px;height:27px;overflow:hidden;background:#fff"><div class="t" style="left:2.5px;top:14.46px;font-size:9.5px;letter-spacing:0.31px;color:#000;font-weight:normal">MOBILE</div></div><div class="r" style="left:1088px;top:407px;width:75px;height:27px;overflow:hidden;background:#fff"><div class="t" style="left:2.5px;top:14.46px;font-size:9.5px;letter-spacing:0.31px;color:#000;font-weight:normal">UNCONTACTED</div></div><div class="r" style="left:1164px;top:407px;width:75px;height:27px;overflow:hidden;background:#fff"><div class="t" style="right:0.7px;top:14.46px;font-size:9.5px;letter-spacing:0.31px;color:#000;font-weight:normal">6784139525</div></div><div class="r" style="left:1240px;top:407px;width:75px;height:27px;overflow:hidden;background:#fff"><div class="t" style="left:2.5px;top:14.46px;font-size:9.5px;letter-spacing:0.31px;color:#000;font-weight:normal">LANDLINE</div></div><div class="r" style="left:36px;top:435px;width:519px;height:27px;overflow:hidden;background:#fff"><div class="t" style="left:1.5px;top:2.46px;font-size:9.5px;letter-spacing:0.31px;color:#000;font-weight:normal">229-809-7112 IS NO RESPONSE.</div><div class="t" style="left:1.5px;top:14.46px;font-size:9.5px;letter-spacing:0.31px;color:#000;font-weight:normal">NO OTHER INFO FOUND FOR OTHER WIRELESS/MO.</div></div><div class="r" style="left:556px;top:435px;width:75px;height:27px;overflow:hidden;background:#fff"><div class="t" style="left:2.5px;top:14.46px;font-size:9.5px;letter-spacing:0.31px;color:#000;font-weight:normal">INTERNAL</div></div><div class="r" style="left:632px;top:435px;width:75px;height:27px;overflow:hidden;background:#fff"><div class="t" style="left:2.5px;top:14.46px;font-size:9.5px;letter-spacing:0.31px;color:#000;font-weight:normal">RUN MOBILE INFO</div></div><div class="r" style="left:708px;top:435px;width:75px;height:27px;overflow:hidden;background:#fff"><div class="t" style="right:0.7px;top:14.46px;font-size:9.5px;letter-spacing:0.31px;color:#000;font-weight:normal">2298097112</div></div><div class="r" style="left:784px;top:435px;width:75px;height:27px;overflow:hidden;background:#fff"><div class="t" style="left:2.5px;top:14.46px;font-size:9.5px;letter-spacing:0.31px;color:#000;font-weight:normal">MOBILE</div></div><div class="r" style="left:860px;top:435px;width:75px;height:27px;overflow:hidden;background:#fff"><div class="t" style="left:2.5px;top:14.46px;font-size:9.5px;letter-spacing:0.31px;color:#000;font-weight:normal">NO RESPONSE</div></div><div class="r" style="left:936px;top:435px;width:75px;height:27px;overflow:hidden;background:#fff"><div class="t" style="right:0.7px;top:14.46px;font-size:9.5px;letter-spacing:0.31px;color:#000;font-weight:normal">7703374606</div></div><div class="r" style="left:1012px;top:435px;width:75px;height:27px;overflow:hidden;background:#fff"><div class="t" style="left:2.5px;top:14.46px;font-size:9.5px;letter-spacing:0.31px;color:#000;font-weight:normal">MOBILE</div></div><div class="r" style="left:1088px;top:435px;width:75px;height:27px;overflow:hidden;background:#fff"><div class="t" style="left:2.5px;top:14.46px;font-size:9.5px;letter-spacing:0.31px;color:#000;font-weight:normal">UNCONTACTED</div></div><div class="r" style="left:1164px;top:435px;width:75px;height:27px;overflow:hidden;background:#fff"><div class="t" style="right:0.7px;top:14.46px;font-size:9.5px;letter-spacing:0.31px;color:#000;font-weight:normal">7704835185</div></div><div class="r" style="left:1240px;top:435px;width:75px;height:27px;overflow:hidden;background:#fff"><div class="t" style="left:2.5px;top:14.46px;font-size:9.5px;letter-spacing:0.31px;color:#000;font-weight:normal">LANDLINE</div></div><div class="r" style="left:36px;top:463px;width:519px;height:27px;overflow:hidden;background:#fff"><div class="t" style="left:1.5px;top:2.46px;font-size:9.5px;letter-spacing:0.31px;color:#000;font-weight:normal">770-896-6449 IS NO RESPONSE.</div><div class="t" style="left:1.5px;top:14.46px;font-size:9.5px;letter-spacing:0.31px;color:#000;font-weight:normal">NO OTHER INFO FOUND FOR OTHER WIRELESS/MO.</div></div><div class="r" style="left:556px;top:463px;width:75px;height:27px;overflow:hidden;background:#fff"><div class="t" style="left:2.5px;top:14.46px;font-size:9.5px;letter-spacing:0.31px;color:#000;font-weight:normal">INTERNAL</div></div><div class="r" style="left:632px;top:463px;width:75px;height:27px;overflow:hidden;background:#fff"><div class="t" style="left:2.5px;top:14.46px;font-size:9.5px;letter-spacing:0.31px;color:#000;font-weight:normal">RUN MOBILE INFO</div></div><div class="r" style="left:708px;top:463px;width:75px;height:27px;overflow:hidden;background:#fff"><div class="t" style="right:0.7px;top:14.46px;font-size:9.5px;letter-spacing:0.31px;color:#000;font-weight:normal">7708966449</div></div><div class="r" style="left:784px;top:463px;width:75px;height:27px;overflow:hidden;background:#fff"><div class="t" style="left:2.5px;top:14.46px;font-size:9.5px;letter-spacing:0.31px;color:#000;font-weight:normal">MOBILE</div></div><div class="r" style="left:860px;top:463px;width:75px;height:27px;overflow:hidden;background:#fff"><div class="t" style="left:2.5px;top:14.46px;font-size:9.5px;letter-spacing:0.31px;color:#000;font-weight:normal">NO RESPONSE</div></div><div class="r" style="left:936px;top:463px;width:75px;height:27px;overflow:hidden;background:#fff"><div class="t" style="right:0.7px;top:14.46px;font-size:9.5px;letter-spacing:0.31px;color:#000;font-weight:normal">7703151490</div></div><div class="r" style="left:1012px;top:463px;width:75px;height:27px;overflow:hidden;background:#fff"><div class="t" style="left:2.5px;top:14.46px;font-size:9.5px;letter-spacing:0.31px;color:#000;font-weight:normal">MOBILE</div></div><div class="r" style="left:1088px;top:463px;width:75px;height:27px;overflow:hidden;background:#fff"><div class="t" style="left:2.5px;top:14.46px;font-size:9.5px;letter-spacing:0.31px;color:#000;font-weight:normal">UNCONTACTED</div></div><div class="r" style="left:1164px;top:463px;width:75px;height:27px;overflow:hidden;background:#fff"><div class="t" style="right:0.7px;top:14.46px;font-size:9.5px;letter-spacing:0.31px;color:#000;font-weight:normal">7709180789</div></div><div class="r" style="left:1240px;top:463px;width:75px;height:27px;overflow:hidden;background:#fff"><div class="t" style="left:2.5px;top:14.46px;font-size:9.5px;letter-spacing:0.31px;color:#000;font-weight:normal">LANDLINE</div></div><div class="r" style="left:36px;top:491px;width:519px;height:15px;overflow:hidden;background:#fff"><div class="t" style="left:1.5px;top:2.46px;font-size:9.5px;letter-spacing:0.31px;color:#000;font-weight:normal">678-365-7783 IS NO RESPONSE.</div></div><div class="r" style="left:556px;top:491px;width:75px;height:15px;overflow:hidden;background:#fff"><div class="t" style="left:2.5px;top:2.46px;font-size:9.5px;letter-spacing:0.31px;color:#000;font-weight:normal">INTERNAL</div></div><div class="r" style="left:632px;top:491px;width:75px;height:15px;overflow:hidden;background:#fff"><div class="t" style="left:2.5px;top:2.46px;font-size:9.5px;letter-spacing:0.31px;color:#000;font-weight:normal">RUN CC LL,OO,</div></div><div class="r" style="left:708px;top:491px;width:75px;height:15px;overflow:hidden;background:#fff"><div class="t" style="right:0.7px;top:2.46px;font-size:9.5px;letter-spacing:0.31px;color:#000;font-weight:normal">6783657783</div></div><div class="r" style="left:784px;top:491px;width:75px;height:15px;overflow:hidden;background:#fff"><div class="t" style="left:2.5px;top:2.46px;font-size:9.5px;letter-spacing:0.31px;color:#000;font-weight:normal">MOBILE</div></div><div class="r" style="left:860px;top:491px;width:75px;height:15px;overflow:hidden;background:#fff"><div class="t" style="left:2.5px;top:2.46px;font-size:9.5px;letter-spacing:0.31px;color:#000;font-weight:normal">NO RESPONSE</div></div><div class="r" style="left:936px;top:491px;width:75px;height:15px;overflow:hidden;background:#fff"><div class="t" style="right:0.7px;top:2.46px;font-size:9.5px;letter-spacing:0.31px;color:#000;font-weight:normal">7709188737</div></div><div class="r" style="left:1012px;top:491px;width:75px;height:15px;overflow:hidden;background:#fff"><div class="t" style="left:2.5px;top:2.46px;font-size:9.5px;letter-spacing:0.31px;color:#000;font-weight:normal">LANDLINE</div></div><div class="r" style="left:1088px;top:491px;width:80px;height:15px;overflow:hidden;background:#fff"><div class="t" style="left:2.5px;top:2.46px;font-size:9.5px;letter-spacing:0.31px;color:#000;font-weight:normal">UNCONTACTED</div></div><div class="r" style="left:36px;top:507px;width:519px;height:15px;overflow:hidden;background:#fff"><div class="t" style="left:1.5px;top:2.46px;font-size:9.5px;letter-spacing:0.31px;color:#000;font-weight:normal">678-856-0323 IS NO RESPONSE.</div></div><div class="r" style="left:556px;top:507px;width:75px;height:15px;overflow:hidden;background:#fff"><div class="t" style="left:2.5px;top:2.46px;font-size:9.5px;letter-spacing:0.31px;color:#000;font-weight:normal">INTERNAL</div></div><div class="r" style="left:632px;top:507px;width:75px;height:15px;overflow:hidden;background:#fff"><div class="t" style="left:2.5px;top:2.46px;font-size:9.5px;letter-spacing:0.31px;color:#000;font-weight:normal">RUN DM,DFD FA</div></div><div class="r" style="left:708px;top:507px;width:75px;height:15px;overflow:hidden;background:#fff"><div class="t" style="right:0.7px;top:2.46px;font-size:9.5px;letter-spacing:0.31px;color:#000;font-weight:normal">6788560323</div></div><div class="r" style="left:784px;top:507px;width:75px;height:15px;overflow:hidden;background:#fff"><div class="t" style="left:2.5px;top:2.46px;font-size:9.5px;letter-spacing:0.31px;color:#000;font-weight:normal">MOBILE</div></div><div class="r" style="left:860px;top:507px;width:77px;height:15px;overflow:hidden;background:#fff"><div class="t" style="left:2.5px;top:2.46px;font-size:9.5px;letter-spacing:0.31px;color:#000;font-weight:normal">NO RESPONSE</div></div><div class="r" style="left:36px;top:523px;width:519px;height:15px;overflow:hidden;background:#fff"><div class="t" style="left:1.5px;top:2.46px;font-size:9.5px;letter-spacing:0.31px;color:#000;font-weight:normal">770-315-0736 AND 229-740-0103 ARE NO RESPONSE.</div></div><div class="r" style="left:556px;top:523px;width:75px;height:15px;overflow:hidden;background:#fff"><div class="t" style="left:2.5px;top:2.46px;font-size:9.5px;letter-spacing:0.31px;color:#000;font-weight:normal">INTERNAL</div></div><div class="r" style="left:632px;top:523px;width:75px;height:15px;overflow:hidden;background:#fff"><div class="t" style="left:2.5px;top:2.46px;font-size:9.5px;letter-spacing:0.31px;color:#000;font-weight:normal">RUN CC LL,DFD</div></div><div class="r" style="left:708px;top:523px;width:75px;height:15px;overflow:hidden;background:#fff"><div class="t" style="right:0.7px;top:2.46px;font-size:9.5px;letter-spacing:0.31px;color:#000;font-weight:normal">2297400103</div></div><div class="r" style="left:784px;top:523px;width:75px;height:15px;overflow:hidden;background:#fff"><div class="t" style="left:2.5px;top:2.46px;font-size:9.5px;letter-spacing:0.31px;color:#000;font-weight:normal">MOBILE</div></div><div class="r" style="left:860px;top:523px;width:75px;height:15px;overflow:hidden;background:#fff"><div class="t" style="left:2.5px;top:2.46px;font-size:9.5px;letter-spacing:0.31px;color:#000;font-weight:normal">NO RESPONSE</div></div><div class="r" style="left:936px;top:523px;width:75px;height:15px;overflow:hidden;background:#fff"><div class="t" style="right:0.7px;top:2.46px;font-size:9.5px;letter-spacing:0.31px;color:#000;font-weight:normal">7703150736</div></div><div class="r" style="left:1012px;top:523px;width:75px;height:15px;overflow:hidden;background:#fff"><div class="t" style="left:2.5px;top:2.46px;font-size:9.5px;letter-spacing:0.31px;color:#000;font-weight:normal">MOBILE</div></div><div class="r" style="left:1088px;top:523px;width:75px;height:15px;overflow:hidden;background:#fff"><div class="t" style="left:2.5px;top:2.46px;font-size:9.5px;letter-spacing:0.31px;color:#000;font-weight:normal">NO RESPONSE</div></div><div class="r" style="left:1164px;top:523px;width:75px;height:15px;overflow:hidden;background:#fff"><div class="t" style="right:0.7px;top:2.46px;font-size:9.5px;letter-spacing:0.31px;color:#000;font-weight:normal">7709221433</div></div><div class="r" style="left:1240px;top:523px;width:75px;height:15px;overflow:hidden;background:#fff"><div class="t" style="left:2.5px;top:2.46px;font-size:9.5px;letter-spacing:0.31px;color:#000;font-weight:normal">LANDLINE</div></div><div class="r" style="left:36px;top:539px;width:519px;height:15px;overflow:hidden;background:#fff"><div class="t" style="left:1.5px;top:2.46px;font-size:9.5px;letter-spacing:0.31px;color:#000;font-weight:normal">408-427-1504 IS NO RESPONSE.</div></div><div class="r" style="left:556px;top:539px;width:75px;height:15px;overflow:hidden;background:#fff"><div class="t" style="left:2.5px;top:2.46px;font-size:9.5px;letter-spacing:0.31px;color:#000;font-weight:normal">INTERNAL</div></div><div class="r" style="left:632px;top:539px;width:75px;height:15px;overflow:hidden;background:#fff"><div class="t" style="left:2.5px;top:2.46px;font-size:9.5px;letter-spacing:0.31px;color:#000;font-weight:normal">GO DOORKNOCK</div></div><div class="r" style="left:708px;top:539px;width:75px;height:15px;overflow:hidden;background:#fff"><div class="t" style="right:0.7px;top:2.46px;font-size:9.5px;letter-spacing:0.31px;color:#000;font-weight:normal">4084271504</div></div><div class="r" style="left:784px;top:539px;width:75px;height:15px;overflow:hidden;background:#fff"><div class="t" style="left:2.5px;top:2.46px;font-size:9.5px;letter-spacing:0.31px;color:#000;font-weight:normal">MOBILE</div></div><div class="r" style="left:860px;top:539px;width:77px;height:15px;overflow:hidden;background:#fff"><div class="t" style="left:2.5px;top:2.46px;font-size:9.5px;letter-spacing:0.31px;color:#000;font-weight:normal">NO RESPONSE</div></div><div class="r" style="left:36px;top:555px;width:519px;height:15px;overflow:hidden;background:#fff"><div class="t" style="left:1.5px;top:2.46px;font-size:9.5px;letter-spacing:0.31px;color:#000;font-weight:normal">678-591-2589 IS NO RESPONSE.</div></div><div class="r" style="left:556px;top:555px;width:75px;height:15px;overflow:hidden;background:#fff"><div class="t" style="left:2.5px;top:2.46px;font-size:9.5px;letter-spacing:0.31px;color:#000;font-weight:normal">INTERNAL</div></div><div class="r" style="left:632px;top:555px;width:75px;height:15px;overflow:hidden;background:#fff"><div class="t" style="left:2.5px;top:2.46px;font-size:9.5px;letter-spacing:0.31px;color:#000;font-weight:normal">GO DOORKNOCK</div></div><div class="r" style="left:708px;top:555px;width:75px;height:15px;overflow:hidden;background:#fff"><div class="t" style="right:0.7px;top:2.46px;font-size:9.5px;letter-spacing:0.31px;color:#000;font-weight:normal">6785912589</div></div><div class="r" style="left:784px;top:555px;width:75px;height:15px;overflow:hidden;background:#fff"><div class="t" style="left:2.5px;top:2.46px;font-size:9.5px;letter-spacing:0.31px;color:#000;font-weight:normal">MOBILE</div></div><div class="r" style="left:860px;top:555px;width:77px;height:15px;overflow:hidden;background:#fff"><div class="t" style="left:2.5px;top:2.46px;font-size:9.5px;letter-spacing:0.31px;color:#000;font-weight:normal">NO RESPONSE</div></div><div class="r" style="left:36px;top:571px;width:519px;height:27px;overflow:hidden;background:#fff"><div class="t" style="left:1.5px;top:2.46px;font-size:9.5px;letter-spacing:0.31px;color:#000;font-weight:normal">678-964-1325 IS NO RESPONSE.</div><div class="t" style="left:1.5px;top:14.46px;font-size:9.5px;letter-spacing:0.31px;color:#000;font-weight:normal">NO OTHER INFO FOUND FOR OTHER WIRELESS/MO.</div></div><div class="r" style="left:556px;top:571px;width:75px;height:27px;overflow:hidden;background:#fff"><div class="t" style="left:2.5px;top:14.46px;font-size:9.5px;letter-spacing:0.31px;color:#000;font-weight:normal">INTERNAL</div></div><div class="r" style="left:632px;top:571px;width:75px;height:27px;overflow:hidden;background:#fff"><div class="t" style="left:2.5px;top:14.46px;font-size:9.5px;letter-spacing:0.31px;color:#000;font-weight:normal">RUN MOBILE INFO</div></div><div class="r" style="left:708px;top:571px;width:75px;height:27px;overflow:hidden;background:#fff"><div class="t" style="right:0.7px;top:14.46px;font-size:9.5px;letter-spacing:0.31px;color:#000;font-weight:normal">6789641325</div></div><div class="r" style="left:784px;top:571px;width:75px;height:27px;overflow:hidden;background:#fff"><div class="t" style="left:2.5px;top:14.46px;font-size:9.5px;letter-spacing:0.31px;color:#000;font-weight:normal">MOBILE</div></div><div class="r" style="left:860px;top:571px;width:75px;height:27px;overflow:hidden;background:#fff"><div class="t" style="left:2.5px;top:14.46px;font-size:9.5px;letter-spacing:0.31px;color:#000;font-weight:normal">NO RESPONSE</div></div><div class="r" style="left:936px;top:571px;width:75px;height:27px;overflow:hidden;background:#fff"><div class="t" style="right:0.7px;top:14.46px;font-size:9.5px;letter-spacing:0.31px;color:#000;font-weight:normal">6789641324</div></div><div class="r" style="left:1012px;top:571px;width:75px;height:27px;overflow:hidden;background:#fff"><div class="t" style="left:2.5px;top:14.46px;font-size:9.5px;letter-spacing:0.31px;color:#000;font-weight:normal">MOBILE</div></div><div class="r" style="left:1088px;top:571px;width:75px;height:27px;overflow:hidden;background:#fff"><div class="t" style="left:2.5px;top:14.46px;font-size:9.5px;letter-spacing:0.31px;color:#000;font-weight:normal">UNCONTACTED</div></div><div class="r" style="left:1164px;top:571px;width:75px;height:27px;overflow:hidden;background:#fff"><div class="t" style="right:0.7px;top:14.46px;font-size:9.5px;letter-spacing:0.31px;color:#000;font-weight:normal">6783529316</div></div><div class="r" style="left:1240px;top:571px;width:75px;height:27px;overflow:hidden;background:#fff"><div class="t" style="left:2.5px;top:14.46px;font-size:9.5px;letter-spacing:0.31px;color:#000;font-weight:normal">LANDLINE</div></div><div class="r" style="left:36px;top:599px;width:519px;height:27px;overflow:hidden;background:#fff"><div class="t" style="left:1.5px;top:2.46px;font-size:9.5px;letter-spacing:0.31px;color:#000;font-weight:normal">404-272-4181 IS NO RESPONSE.</div><div class="t" style="left:1.5px;top:14.46px;font-size:9.5px;letter-spacing:0.31px;color:#000;font-weight:normal">GO TO CC.</div></div><div class="r" style="left:556px;top:599px;width:75px;height:27px;overflow:hidden;background:#fff"><div class="t" style="left:2.5px;top:14.46px;font-size:9.5px;letter-spacing:0.31px;color:#000;font-weight:normal">INTERNAL</div></div><div class="r" style="left:632px;top:599px;width:75px;height:27px;overflow:hidden;background:#fff"><div class="t" style="left:2.5px;top:14.46px;font-size:9.5px;letter-spacing:0.31px;color:#000;font-weight:normal">RUN CC LL,LVP</div></div><div class="r" style="left:708px;top:599px;width:75px;height:27px;overflow:hidden;background:#fff"><div class="t" style="right:0.7px;top:14.46px;font-size:9.5px;letter-spacing:0.31px;color:#000;font-weight:normal">4042724181</div></div><div class="r" style="left:784px;top:599px;width:75px;height:27px;overflow:hidden;background:#fff"><div class="t" style="left:2.5px;top:14.46px;font-size:9.5px;letter-spacing:0.31px;color:#000;font-weight:normal">MOBILE</div></div><div class="r" style="left:860px;top:599px;width:75px;height:27px;overflow:hidden;background:#fff"><div class="t" style="left:2.5px;top:14.46px;font-size:9.5px;letter-spacing:0.31px;color:#000;font-weight:normal">NO RESPONSE</div></div><div class="r" style="left:936px;top:599px;width:75px;height:27px;overflow:hidden;background:#fff"><div class="t" style="right:0.7px;top:14.46px;font-size:9.5px;letter-spacing:0.31px;color:#000;font-weight:normal">7702672215</div></div><div class="r" style="left:1012px;top:599px;width:75px;height:27px;overflow:hidden;background:#fff"><div class="t" style="left:2.5px;top:14.46px;font-size:9.5px;letter-spacing:0.31px;color:#000;font-weight:normal">LANDLINE</div></div><div class="r" style="left:1088px;top:599px;width:75px;height:27px;overflow:hidden;background:#fff"><div class="t" style="left:2.5px;top:14.46px;font-size:9.5px;letter-spacing:0.31px;color:#000;font-weight:normal">UNCONTACTED</div></div><div class="r" style="left:1164px;top:599px;width:75px;height:27px;overflow:hidden;background:#fff"><div class="t" style="right:0.7px;top:14.46px;font-size:9.5px;letter-spacing:0.31px;color:#000;font-weight:normal">6784250683</div></div><div class="r" style="left:1240px;top:599px;width:75px;height:27px;overflow:hidden;background:#fff"><div class="t" style="left:2.5px;top:14.46px;font-size:9.5px;letter-spacing:0.31px;color:#000;font-weight:normal">LANDLINE</div></div><div class="r" style="left:36px;top:627px;width:519px;height:27px;overflow:hidden;background:#fff"><div class="t" style="left:1.5px;top:2.46px;font-size:9.5px;letter-spacing:0.31px;color:#000;font-weight:normal">770-354-1897 IS NO RESPONSE.</div><div class="t" style="left:1.5px;top:14.46px;font-size:9.5px;letter-spacing:0.31px;color:#000;font-weight:normal">NO OTHER INFO FOUND FOR OTHER WIRELESS/MO.</div></div><div class="r" style="left:556px;top:627px;width:75px;height:27px;overflow:hidden;background:#fff"><div class="t" style="left:2.5px;top:14.46px;font-size:9.5px;letter-spacing:0.31px;color:#000;font-weight:normal">INTERNAL</div></div><div class="r" style="left:632px;top:627px;width:75px;height:27px;overflow:hidden;background:#fff"><div class="t" style="left:2.5px;top:14.46px;font-size:9.5px;letter-spacing:0.31px;color:#000;font-weight:normal">RUN CC LL,OO,</div></div><div class="r" style="left:708px;top:627px;width:75px;height:27px;overflow:hidden;background:#fff"><div class="t" style="right:0.7px;top:14.46px;font-size:9.5px;letter-spacing:0.31px;color:#000;font-weight:normal">7703541897</div></div><div class="r" style="left:784px;top:627px;width:75px;height:27px;overflow:hidden;background:#fff"><div class="t" style="left:2.5px;top:14.46px;font-size:9.5px;letter-spacing:0.31px;color:#000;font-weight:normal">MOBILE</div></div><div class="r" style="left:860px;top:627px;width:75px;height:27px;overflow:hidden;background:#fff"><div class="t" style="left:2.5px;top:14.46px;font-size:9.5px;letter-spacing:0.31px;color:#000;font-weight:normal">NO RESPONSE</div></div><div class="r" style="left:936px;top:627px;width:75px;height:27px;overflow:hidden;background:#fff"><div class="t" style="right:0.7px;top:14.46px;font-size:9.5px;letter-spacing:0.31px;color:#000;font-weight:normal">4046804080</div></div><div class="r" style="left:1012px;top:627px;width:75px;height:27px;overflow:hidden;background:#fff"><div class="t" style="left:2.5px;top:14.46px;font-size:9.5px;letter-spacing:0.31px;color:#000;font-weight:normal">MOBILE</div></div><div class="r" style="left:1088px;top:627px;width:75px;height:27px;overflow:hidden;background:#fff"><div class="t" style="left:2.5px;top:14.46px;font-size:9.5px;letter-spacing:0.31px;color:#000;font-weight:normal">UNCONTACTED</div></div><div class="r" style="left:1164px;top:627px;width:75px;height:27px;overflow:hidden;background:#fff"><div class="t" style="right:0.7px;top:14.46px;font-size:9.5px;letter-spacing:0.31px;color:#000;font-weight:normal">7709225623</div></div><div class="r" style="left:1240px;top:627px;width:75px;height:27px;overflow:hidden;background:#fff"><div class="t" style="left:2.5px;top:14.46px;font-size:9.5px;letter-spacing:0.31px;color:#000;font-weight:normal">LANDLINE</div></div><div class="r" style="left:36px;top:655px;width:519px;height:27px;overflow:hidden;background:#fff"><div class="t" style="left:1.5px;top:2.46px;font-size:9.5px;letter-spacing:0.31px;color:#000;font-weight:normal">404-790-1703 IS NO RESPONSE.</div><div class="t" style="left:1.5px;top:14.46px;font-size:9.5px;letter-spacing:0.31px;color:#000;font-weight:normal">NO OTHER INFO FOUND FOR OTHER WIRELESS/MO.</div></div><div class="r" style="left:556px;top:655px;width:75px;height:27px;overflow:hidden;background:#fff"><div class="t" style="left:2.5px;top:14.46px;font-size:9.5px;letter-spacing:0.31px;color:#000;font-weight:normal">INTERNAL</div></div><div class="r" style="left:632px;top:655px;width:75px;height:27px;overflow:hidden;background:#fff"><div class="t" style="left:2.5px;top:14.46px;font-size:9.5px;letter-spacing:0.31px;color:#000;font-weight:normal">RUN CC LL,RUN</div></div><div class="r" style="left:708px;top:655px;width:75px;height:27px;overflow:hidden;background:#fff"><div class="t" style="right:0.7px;top:14.46px;font-size:9.5px;letter-spacing:0.31px;color:#000;font-weight:normal">4047901703</div></div><div class="r" style="left:784px;top:655px;width:75px;height:27px;overflow:hidden;background:#fff"><div class="t" style="left:2.5px;top:14.46px;font-size:9.5px;letter-spacing:0.31px;color:#000;font-weight:normal">MOBILE</div></div><div class="r" style="left:860px;top:655px;width:75px;height:27px;overflow:hidden;background:#fff"><div class="t" style="left:2.5px;top:14.46px;font-size:9.5px;letter-spacing:0.31px;color:#000;font-weight:normal">NO RESPONSE</div></div><div class="r" style="left:936px;top:655px;width:75px;height:27px;overflow:hidden;background:#fff"><div class="t" style="right:0.7px;top:14.46px;font-size:9.5px;letter-spacing:0.31px;color:#000;font-weight:normal">7707610294</div></div><div class="r" style="left:1012px;top:655px;width:75px;height:27px;overflow:hidden;background:#fff"><div class="t" style="left:2.5px;top:14.46px;font-size:9.5px;letter-spacing:0.31px;color:#000;font-weight:normal">LANDLINE</div></div><div class="r" style="left:1088px;top:655px;width:75px;height:27px;overflow:hidden;background:#fff"><div class="t" style="left:2.5px;top:14.46px;font-size:9.5px;letter-spacing:0.31px;color:#000;font-weight:normal">UNCONTACTED</div></div><div class="r" style="left:1164px;top:655px;width:75px;height:27px;overflow:hidden;background:#fff"><div class="t" style="right:0.7px;top:14.46px;font-size:9.5px;letter-spacing:0.31px;color:#000;font-weight:normal">4042106856</div></div><div class="r" style="left:1240px;top:655px;width:75px;height:27px;overflow:hidden;background:#fff"><div class="t" style="left:2.5px;top:14.46px;font-size:9.5px;letter-spacing:0.31px;color:#000;font-weight:normal">MOBILE</div></div><div class="r" style="left:36px;top:683px;width:519px;height:7px;overflow:hidden;background:#fff"><div class="t" style="left:1.5px;top:0.76px;font-size:9.5px;letter-spacing:0.31px;color:#000;font-weight:normal">702-897-4147 IS NO RESPONSE.</div><div class="t" style="left:1.5px;top:12.76px;font-size:9.5px;letter-spacing:0.31px;color:#000;font-weight:normal">NO OTHER INFO FOUND FOR OTHER WIRELESS/MO.</div></div><svg class="s" style="left:543px;top:192px;" width="9" height="6" viewBox="0 0 9 6"><path d="M0 0.5 H9 M2 2.5 H7 M3.5 4.5 H5.5" stroke="#4fae86" stroke-width="1.1"/></svg><svg class="s" style="left:619px;top:192px;" width="9" height="6" viewBox="0 0 9 6"><path d="M0 0.5 H9 M2 2.5 H7 M3.5 4.5 H5.5" stroke="#4fae86" stroke-width="1.1"/></svg><svg class="s" style="left:695px;top:192px;" width="9" height="6" viewBox="0 0 9 6"><path d="M0 0.5 H9 M2 2.5 H7 M3.5 4.5 H5.5" stroke="#4fae86" stroke-width="1.1"/></svg><svg class="s" style="left:771px;top:192px;" width="9" height="6" viewBox="0 0 9 6"><path d="M0 0.5 H9 M2 2.5 H7 M3.5 4.5 H5.5" stroke="#4fae86" stroke-width="1.1"/></svg><svg class="s" style="left:847px;top:192px;" width="9" height="6" viewBox="0 0 9 6"><path d="M0 0.5 H9 M2 2.5 H7 M3.5 4.5 H5.5" stroke="#4fae86" stroke-width="1.1"/></svg><svg class="s" style="left:923px;top:192px;" width="9" height="6" viewBox="0 0 9 6"><path d="M0 0.5 H9 M2 2.5 H7 M3.5 4.5 H5.5" stroke="#4fae86" stroke-width="1.1"/></svg><svg class="s" style="left:999px;top:192px;" width="9" height="6" viewBox="0 0 9 6"><path d="M0 0.5 H9 M2 2.5 H7 M3.5 4.5 H5.5" stroke="#4fae86" stroke-width="1.1"/></svg><svg class="s" style="left:1075px;top:192px;" width="9" height="6" viewBox="0 0 9 6"><path d="M0 0.5 H9 M2 2.5 H7 M3.5 4.5 H5.5" stroke="#4fae86" stroke-width="1.1"/></svg><svg class="s" style="left:1151px;top:192px;" width="9" height="6" viewBox="0 0 9 6"><path d="M0 0.5 H9 M2 2.5 H7 M3.5 4.5 H5.5" stroke="#4fae86" stroke-width="1.1"/></svg><svg class="s" style="left:1227px;top:192px;" width="9" height="6" viewBox="0 0 9 6"><path d="M0 0.5 H9 M2 2.5 H7 M3.5 4.5 H5.5" stroke="#4fae86" stroke-width="1.1"/></svg><svg class="s" style="left:1303px;top:192px;" width="9" height="6" viewBox="0 0 9 6"><path d="M0 0.5 H9 M2 2.5 H7 M3.5 4.5 H5.5" stroke="#4fae86" stroke-width="1.1"/></svg><div class="r" style="left:859px;top:186px;width:77px;height:1px;background:#3a6db5;"></div><div class="r" style="left:859px;top:200px;width:77px;height:2px;background:#2f62a8;"></div><div class="r" style="left:859px;top:186px;width:2px;height:16px;background:#2f62a8;"></div><div class="r" style="left:934px;top:186px;width:2px;height:16px;background:#2f62a8;"></div><div class="r" style="left:932px;top:199px;width:6px;height:6px;background:#2f62a8;border:1px solid #fff;box-sizing:border-box;"></div><div class="r" style="left:1087px;top:682px;width:77px;height:2px;background:#5a5a5a;"></div><div class="r" style="left:1087px;top:682px;width:77px;height:1px;background:#222;"></div><div class="r" style="left:1087px;top:682px;width:1px;height:7px;background:#222;"></div><div class="r" style="left:35px;top:692px;width:1280px;height:5px;background:#fff;"></div><div class="r" style="left:449px;top:689px;width:364px;height:7px;background:#dadce0;border-radius:3px;"></div><div class="r" style="left:1315px;top:169px;width:10px;height:528px;background:#fff;"></div><div class="r" style="left:1315px;top:169px;width:1px;height:528px;background:#e2e3e3;"></div><div class="r" style="left:1317px;top:188px;width:6px;height:19px;background:#dadce0;border-radius:3px;"></div><div class="r" style="left:1316px;top:169px;width:9px;height:17px;background:#eef3ef;"></div><div class="r" style="left:0px;top:697px;width:1325px;height:31px;background:#f4f4f4;"></div><div class="r" style="left:0px;top:697px;width:1325px;height:1px;background:#e3e5e8;"></div><svg class="s" style="left:37px;top:707px;" width="10" height="10" viewBox="0 0 10 10"><path d="M5 1 V9 M1 5 H9" stroke="#5f6368" stroke-width="1.3"/></svg><svg class="s" style="left:60px;top:708px;" width="11" height="9" viewBox="0 0 11 9"><path d="M0.5 1 H10.5 M0.5 3.3 H10.5 M0.5 5.6 H10.5 M0.5 7.9 H10.5" stroke="#5f6368" stroke-width="1.1"/></svg><div class="r" style="left:88px;top:697px;width:175px;height:31px;background:#fff;box-shadow:1px 0 2px rgba(0,0,0,.18);"></div><div class="t" style="left:100.6px;top:705.51px;font-size:11.4px;color:#11652f;font-weight:normal;-webkit-text-stroke:0.25px #11652f;">No Response/Uncontacted</div><svg class="s" style="left:244px;top:711px;" width="7" height="4" viewBox="0 0 7 4"><path d="M0 0 H7 L3.5 3.5Z" fill="#5f6368"/></svg><div class="r" style="left:1244px;top:698px;width:81px;height:30px;background:#fff;border-left:1px solid #e0e0e0;box-sizing:border-box;"></div><svg class="s" style="left:1253px;top:705px;" width="14" height="15" viewBox="0 0 14 15"><path d="M0 1 A1 1 0 0 1 1 0 H13 A1 1 0 0 1 14 1 V12 A1 1 0 0 1 13 13 H8.5 L7 14.5 L5.5 13 H1 A1 1 0 0 1 0 12Z" fill="#0f9d58"/><path d="M7 3 L8.2 5.8 L11 7 L8.2 8.2 L7 11 L5.8 8.2 L3 7 L5.8 5.8Z" fill="#fff"/></svg><div class="t" style="left:1277.5px;top:707.54px;font-size:9.2px;color:#188038;font-weight:normal;">Explore</div><svg class="s" style="left:1317px;top:668px;" width="6" height="4" viewBox="0 0 6 4"><path d="M0 4 L3 0 L6 4Z" fill="#bdc1c6"/></svg><svg class="s" style="left:1317px;top:680px;" width="6" height="4" viewBox="0 0 6 4"><path d="M0 0 L3 4 L6 0Z" fill="#bdc1c6"/></svg><svg class="s" style="left:1296px;top:690px;" width="4" height="6" viewBox="0 0 4 6"><path d="M4 0 L0 3 L4 6Z" fill="#bdc1c6"/></svg><svg class="s" style="left:1307px;top:690px;" width="4" height="6" viewBox="0 0 4 6"><path d="M0 0 L4 3 L0 6Z" fill="#bdc1c6"/></svg><div class="r" style="left:1326px;top:120px;width:40px;height:608px;background:#fff;"></div><svg class="s" style="left:1336px;top:131px;" width="20" height="20" viewBox="0 0 20 20"><circle cx="10" cy="10" r="10" fill="#f1f3f4"/><rect x="4.5" y="4.5" width="11" height="11" fill="#fff"/><path d="M4.5 4.5 H15.5 V7 H4.5Z" fill="#4285f4"/><path d="M4.5 4.5 V15.5 H7 V4.5Z" fill="#4285f4"/><path d="M15.5 4.5 V13 H13 V4.5Z" fill="#fbbc04"/><path d="M4.5 15.5 H13 V13 H4.5Z" fill="#34a853"/><path d="M13 13 H15.5 L13 15.5Z" fill="#ea4335"/><text x="10" y="12.3" text-anchor="middle" font-size="4.5" font-family="Liberation Sans" fill="#4285f4">31</text></svg><svg class="s" style="left:1339px;top:176px;" width="14" height="14" viewBox="0 0 14 14"><rect width="14" height="14" rx="1.5" fill="#fbbc04"/><circle cx="7" cy="6.5" r="2.5" fill="#fff"/><rect x="6" y="8.5" width="2" height="2" fill="#fff"/></svg><svg class="s" style="left:1339px;top:218px;" width="14" height="14" viewBox="0 0 14 14"><circle cx="7" cy="7" r="7" fill="#1a73e8"/><path d="M3.5 9.5 L5 11 M5 10.5 L10.5 4.5 L11.5 5.5 L6 11.5Z" stroke="#fff" stroke-width="1" fill="#fff"/><path d="M3.5 9 L2.5 8" stroke="#fbbc04" stroke-width="1"/></svg><svg class="s" style="left:1341px;top:702px;" width="6" height="10" viewBox="0 0 6 10"><path d="M1 1 L5 5 L1 9" stroke="#5f6368" stroke-width="1.5" fill="none"/></svg><svg class="s" style="left:688px;top:328px;" width="76" height="76" viewBox="0 0 76 76"><circle cx="38" cy="37" r="34" stroke="#eef21f" stroke-width="4.5" fill="none" opacity=".95"/></svg><svg class="s" style="left:725px;top:366px;" width="12" height="19" viewBox="0 0 12 19"><path d="M0.5 0.5 L0.5 15 L4 11.8 L6.5 17.5 L8.8 16.5 L6.3 11 L11 11Z" fill="#fff" stroke="#000" stroke-width="1" stroke-linejoin="round"/></svg>
</body></html>
